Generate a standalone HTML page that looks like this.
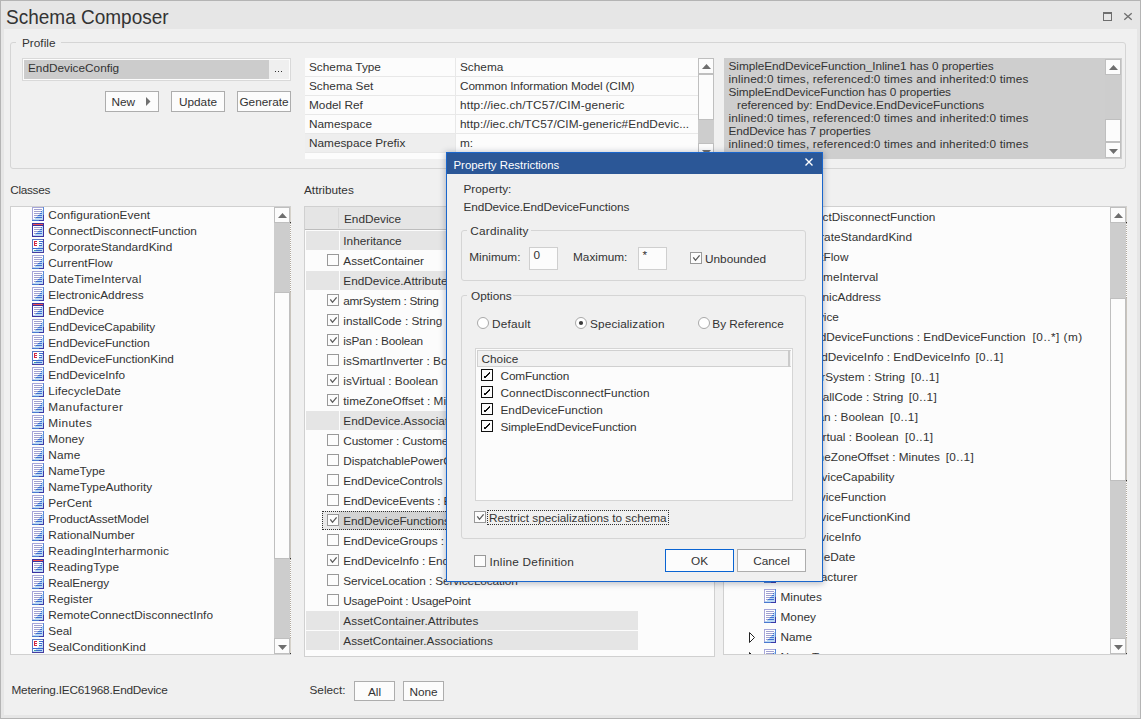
<!DOCTYPE html><html><head><meta charset="utf-8"><style>
*{margin:0;padding:0;box-sizing:border-box}
html,body{width:1141px;height:719px;overflow:hidden;background:#f0f0f0}
body{position:relative;font-family:"Liberation Sans",sans-serif;font-size:11.8px;line-height:16px;color:#333}
.t{position:absolute;white-space:nowrap;line-height:16px}
.abs{position:absolute}
svg{position:absolute;overflow:visible}
</style></head><body>
<div style="position:absolute;left:0px;top:0px;width:1141px;height:719px;border:1px solid #b4b4b4;background:#e6e6e6"></div>
<div style="position:absolute;left:4px;top:29px;width:1133px;height:686px;background:#f0f0f0"></div>
<div class="t" style="left:6px;top:4.6px;font-size:19px;line-height:22px;transform:scaleY(1.1);transform-origin:0 0;color:#333">Schema Composer</div>
<div style="position:absolute;left:1103px;top:12px;width:9px;height:9px;border:1px solid #6e6e6e;border-top-width:2px"></div>
<svg style="left:1124px;top:13px" width="8" height="7"><path d="M0.3 0.3L7.7 6.7M7.7 0.3L0.3 6.7" stroke="#6e6e6e" stroke-width="1.3"/></svg>
<div style="position:absolute;left:10px;top:42px;width:1116px;height:127px;border:1px solid #d5d5d5;border-radius:3px"></div>
<div style="position:absolute;left:16px;top:36px;width:45px;height:12px;background:#f0f0f0"></div>
<div class="t" style="left:22px;top:35px;">Profile</div>
<div style="position:absolute;left:22px;top:58px;width:269px;height:23px;border:1px solid #d9d9d9;background:#fcfcfc"></div>
<div style="position:absolute;left:24px;top:60px;width:245px;height:19px;background:#cccccc"></div>
<div style="position:absolute;left:269px;top:60px;width:20px;height:19px;background:#efefef"></div>
<div class="t" style="left:28px;top:60px;">EndDeviceConfig</div>
<div style="position:absolute;left:275px;top:71px;width:1px;height:1px;background:#333"></div>
<div style="position:absolute;left:278px;top:71px;width:1px;height:1px;background:#333"></div>
<div style="position:absolute;left:281px;top:71px;width:1px;height:1px;background:#333"></div>
<div style="position:absolute;left:105px;top:91px;width:54px;height:21px;border:1px solid #adadad;background:#fcfcfc"></div>
<div class="t" style="left:111.5px;top:94px;">New</div>
<svg style="left:146px;top:97px" width="5" height="9"><path d="M0 0L4.5 4.5L0 9Z" fill="#707070"/></svg>
<div style="position:absolute;left:171px;top:91px;width:54px;height:21px;border:1px solid #adadad;background:#fcfcfc"></div>
<div class="t" style="left:171px;top:94px;width:54px;text-align:center">Update</div>
<div style="position:absolute;left:237px;top:91px;width:54px;height:21px;border:1px solid #adadad;background:#fcfcfc"></div>
<div class="t" style="left:237px;top:94px;width:54px;text-align:center">Generate</div>
<div style="position:absolute;left:305px;top:58px;width:393px;height:101px;background:#fcfcfc"></div>
<div style="position:absolute;left:305px;top:76px;width:393px;height:1px;background:#e8e8e8"></div>
<div class="t" style="left:309px;top:59px;">Schema Type</div>
<div class="t" style="left:460px;top:59px;">Schema</div>
<div style="position:absolute;left:305px;top:95px;width:393px;height:1px;background:#e8e8e8"></div>
<div class="t" style="left:309px;top:78px;">Schema Set</div>
<div class="t" style="left:460px;top:78px;letter-spacing:-0.131px;">Common Information Model (CIM)</div>
<div style="position:absolute;left:305px;top:114px;width:393px;height:1px;background:#e8e8e8"></div>
<div class="t" style="left:309px;top:97px;">Model Ref</div>
<div class="t" style="left:460px;top:97px;letter-spacing:0.152px;">http://iec.ch/TC57/CIM-generic</div>
<div style="position:absolute;left:305px;top:133px;width:393px;height:1px;background:#e8e8e8"></div>
<div class="t" style="left:309px;top:116px;">Namespace</div>
<div class="t" style="left:460px;top:116px;letter-spacing:0.054px;">http://iec.ch/TC57/CIM-generic#EndDevic...</div>
<div style="position:absolute;left:305px;top:134px;width:150px;height:18px;background:#eeeeee"></div>
<div style="position:absolute;left:305px;top:152px;width:393px;height:1px;background:#e8e8e8"></div>
<div class="t" style="left:309px;top:135px;">Namespace Prefix</div>
<div class="t" style="left:460px;top:135px;">m:</div>
<div style="position:absolute;left:455px;top:58px;width:1px;height:94px;background:#e8e8e8"></div>
<div style="position:absolute;left:698px;top:58px;width:16px;height:101px;background:#cdcdcd"></div>
<div style="position:absolute;left:698px;top:58px;width:16px;height:16px;border:1px solid #bfbfbf;background:#fcfcfc"></div>
<svg style="left:702px;top:64px" width="9" height="5"><path d="M0 5L4.5 0L9 5Z" fill="#6e6e6e"/></svg>
<div style="position:absolute;left:698px;top:143px;width:16px;height:16px;border:1px solid #bfbfbf;background:#fcfcfc"></div>
<svg style="left:702px;top:149.5px" width="9" height="5"><path d="M0 0L4.5 5L9 0Z" fill="#6e6e6e"/></svg>
<div style="position:absolute;left:698px;top:74px;width:16px;height:46px;border:1px solid #bfbfbf;background:#fcfcfc"></div>
<div style="position:absolute;left:724px;top:58px;width:398px;height:101px;background:#cecece"></div>
<div class="t" style="left:728.5px;top:58px;letter-spacing:-0.051px;">SimpleEndDeviceFunction_Inline1 has 0 properties</div>
<div class="t" style="left:728.5px;top:71px;letter-spacing:0.132px;">inlined:0 times, referenced:0 times and inherited:0 times</div>
<div class="t" style="left:728.5px;top:84px;letter-spacing:-0.095px;">SimpleEndDeviceFunction has 0 properties</div>
<div class="t" style="left:737px;top:97px;">referenced by: EndDevice.EndDeviceFunctions</div>
<div class="t" style="left:728.5px;top:110px;letter-spacing:0.132px;">inlined:0 times, referenced:0 times and inherited:0 times</div>
<div class="t" style="left:728.5px;top:123px;letter-spacing:-0.108px;">EndDevice has 7 properties</div>
<div class="t" style="left:728.5px;top:136px;letter-spacing:0.132px;">inlined:0 times, referenced:0 times and inherited:0 times</div>
<div style="position:absolute;left:1105px;top:59px;width:16px;height:99px;background:#cdcdcd"></div>
<div style="position:absolute;left:1105px;top:59px;width:16px;height:16px;border:1px solid #bfbfbf;background:#fcfcfc"></div>
<svg style="left:1109px;top:65px" width="9" height="5"><path d="M0 5L4.5 0L9 5Z" fill="#6e6e6e"/></svg>
<div style="position:absolute;left:1105px;top:142px;width:16px;height:16px;border:1px solid #bfbfbf;background:#fcfcfc"></div>
<svg style="left:1109px;top:148.5px" width="9" height="5"><path d="M0 0L4.5 5L9 0Z" fill="#6e6e6e"/></svg>
<div style="position:absolute;left:1105px;top:119px;width:16px;height:23px;border:1px solid #bfbfbf;background:#fcfcfc"></div>
<div class="t" style="left:10.2px;top:182px;letter-spacing:-0.300px;">Classes</div>
<div class="t" style="left:304px;top:182px;">Attributes</div>
<div style="position:absolute;left:10px;top:206px;width:281px;height:449px;border:1px solid #d0d0d0;background:#fcfcfc"></div>
<svg style="left:32px;top:207px" width="12" height="14"><g shape-rendering="crispEdges"><rect x="0" y="0" width="12" height="14" fill="#fff"/><rect x="10" y="3" width="1" height="1" fill="#bcd8f2"/><rect x="9" y="4" width="2" height="1" fill="#bcd8f2"/><rect x="9" y="5" width="2" height="1" fill="#bcd8f2"/><rect x="8" y="6" width="3" height="1" fill="#bcd8f2"/><rect x="7" y="7" width="4" height="1" fill="#bcd8f2"/><rect x="6" y="8" width="5" height="1" fill="#bcd8f2"/><rect x="5" y="9" width="6" height="1" fill="#bcd8f2"/><rect x="4" y="10" width="7" height="1" fill="#bcd8f2"/><rect x="3" y="11" width="8" height="1" fill="#bcd8f2"/><rect x="1" y="12" width="10" height="1" fill="#bcd8f2"/><rect x="2" y="2" width="8" height="1" fill="#a0a0d0"/><rect x="2" y="4" width="8" height="1" fill="#a0a0d0"/><rect x="9" y="4" width="1" height="1" fill="#3f6fd2"/><rect x="2" y="6" width="8" height="1" fill="#a0a0d0"/><rect x="8" y="6" width="2" height="1" fill="#3f6fd2"/><rect x="2" y="8" width="8" height="1" fill="#a0a0d0"/><rect x="6" y="8" width="4" height="1" fill="#3f6fd2"/><rect x="2" y="10" width="8" height="1" fill="#a0a0d0"/><rect x="4" y="10" width="6" height="1" fill="#3f6fd2"/><rect x="0" y="0" width="12" height="1" fill="#a6a6da"/><rect x="0" y="0" width="1" height="14" fill="#a6a6da"/><rect x="11" y="0" width="1" height="8" fill="#5a8ad8"/><rect x="11" y="8" width="1" height="6" fill="#3a3aa8"/><rect x="0" y="13" width="7" height="1" fill="#4a7ad0"/><rect x="7" y="13" width="5" height="1" fill="#3a3aa8"/></g></svg>
<div class="t" style="left:48.3px;top:207px;letter-spacing:0.088px;">ConfigurationEvent</div>
<svg style="left:32px;top:223px" width="12" height="14"><g shape-rendering="crispEdges"><rect x="0" y="0" width="12" height="14" fill="#fff"/><rect x="10" y="3" width="1" height="1" fill="#bcd8f2"/><rect x="9" y="4" width="2" height="1" fill="#bcd8f2"/><rect x="9" y="5" width="2" height="1" fill="#bcd8f2"/><rect x="8" y="6" width="3" height="1" fill="#bcd8f2"/><rect x="7" y="7" width="4" height="1" fill="#bcd8f2"/><rect x="6" y="8" width="5" height="1" fill="#bcd8f2"/><rect x="5" y="9" width="6" height="1" fill="#bcd8f2"/><rect x="4" y="10" width="7" height="1" fill="#bcd8f2"/><rect x="3" y="11" width="8" height="1" fill="#bcd8f2"/><rect x="1" y="12" width="10" height="1" fill="#bcd8f2"/><rect x="2" y="4" width="8" height="1" fill="#a0a0d0"/><rect x="9" y="4" width="1" height="1" fill="#3f6fd2"/><rect x="2" y="6" width="8" height="1" fill="#a0a0d0"/><rect x="8" y="6" width="2" height="1" fill="#3f6fd2"/><rect x="2" y="8" width="8" height="1" fill="#a0a0d0"/><rect x="6" y="8" width="4" height="1" fill="#3f6fd2"/><rect x="2" y="10" width="8" height="1" fill="#a0a0d0"/><rect x="4" y="10" width="6" height="1" fill="#3f6fd2"/><rect x="0" y="0" width="12" height="1" fill="#3a32a0"/><rect x="0" y="0" width="1" height="14" fill="#3a32a0"/><rect x="11" y="0" width="1" height="14" fill="#3a32a0"/><rect x="0" y="13" width="12" height="1" fill="#3a32a0"/><rect x="1" y="1" width="10" height="1" fill="#f05050"/><rect x="1" y="2" width="10" height="1" fill="#3a32a0"/></g></svg>
<div class="t" style="left:48.3px;top:223px;letter-spacing:0.042px;">ConnectDisconnectFunction</div>
<svg style="left:32px;top:239px" width="12" height="14"><g shape-rendering="crispEdges"><rect x="0" y="0" width="12" height="14" fill="#fff"/><rect x="10" y="3" width="1" height="1" fill="#bcd8f2"/><rect x="9" y="4" width="2" height="1" fill="#bcd8f2"/><rect x="9" y="5" width="2" height="1" fill="#bcd8f2"/><rect x="8" y="6" width="3" height="1" fill="#bcd8f2"/><rect x="7" y="7" width="4" height="1" fill="#bcd8f2"/><rect x="6" y="8" width="5" height="1" fill="#bcd8f2"/><rect x="5" y="9" width="6" height="1" fill="#bcd8f2"/><rect x="4" y="10" width="7" height="1" fill="#bcd8f2"/><rect x="3" y="11" width="8" height="1" fill="#bcd8f2"/><rect x="1" y="12" width="10" height="1" fill="#bcd8f2"/><rect x="0" y="0" width="12" height="1" fill="#5a78c4"/><rect x="0" y="0" width="1" height="14" fill="#5a78c4"/><rect x="11" y="0" width="1" height="14" fill="#463ea0"/><rect x="0" y="13" width="12" height="1" fill="#463ea0"/><rect x="2" y="2" width="1" height="5" fill="#d42840"/><rect x="2" y="2" width="3" height="1" fill="#d42840"/><rect x="2" y="4" width="3" height="1" fill="#d42840"/><rect x="2" y="6" width="3" height="1" fill="#d42840"/><rect x="7" y="2" width="4" height="1" fill="#3a6ad0"/><rect x="7" y="4" width="1" height="1" fill="#3aa0a0"/><rect x="8" y="4" width="2" height="1" fill="#3a6ad0"/><rect x="7" y="6" width="3" height="1" fill="#3a6ad0"/><rect x="1" y="9" width="10" height="1" fill="#3a6ad0"/><rect x="2" y="11" width="2" height="1" fill="#3aa0a0"/><rect x="4" y="11" width="6" height="1" fill="#3a6ad0"/></g></svg>
<div class="t" style="left:48.3px;top:239px;">CorporateStandardKind</div>
<svg style="left:32px;top:255px" width="12" height="14"><g shape-rendering="crispEdges"><rect x="0" y="0" width="12" height="14" fill="#fff"/><rect x="10" y="3" width="1" height="1" fill="#bcd8f2"/><rect x="9" y="4" width="2" height="1" fill="#bcd8f2"/><rect x="9" y="5" width="2" height="1" fill="#bcd8f2"/><rect x="8" y="6" width="3" height="1" fill="#bcd8f2"/><rect x="7" y="7" width="4" height="1" fill="#bcd8f2"/><rect x="6" y="8" width="5" height="1" fill="#bcd8f2"/><rect x="5" y="9" width="6" height="1" fill="#bcd8f2"/><rect x="4" y="10" width="7" height="1" fill="#bcd8f2"/><rect x="3" y="11" width="8" height="1" fill="#bcd8f2"/><rect x="1" y="12" width="10" height="1" fill="#bcd8f2"/><rect x="2" y="2" width="8" height="1" fill="#a0a0d0"/><rect x="2" y="4" width="8" height="1" fill="#a0a0d0"/><rect x="9" y="4" width="1" height="1" fill="#3f6fd2"/><rect x="2" y="6" width="8" height="1" fill="#a0a0d0"/><rect x="8" y="6" width="2" height="1" fill="#3f6fd2"/><rect x="2" y="8" width="8" height="1" fill="#a0a0d0"/><rect x="6" y="8" width="4" height="1" fill="#3f6fd2"/><rect x="2" y="10" width="8" height="1" fill="#a0a0d0"/><rect x="4" y="10" width="6" height="1" fill="#3f6fd2"/><rect x="0" y="0" width="12" height="1" fill="#a6a6da"/><rect x="0" y="0" width="1" height="14" fill="#a6a6da"/><rect x="11" y="0" width="1" height="8" fill="#5a8ad8"/><rect x="11" y="8" width="1" height="6" fill="#3a3aa8"/><rect x="0" y="13" width="7" height="1" fill="#4a7ad0"/><rect x="7" y="13" width="5" height="1" fill="#3a3aa8"/></g></svg>
<div class="t" style="left:48.3px;top:255px;">CurrentFlow</div>
<svg style="left:32px;top:271px" width="12" height="14"><g shape-rendering="crispEdges"><rect x="0" y="0" width="12" height="14" fill="#fff"/><rect x="10" y="3" width="1" height="1" fill="#bcd8f2"/><rect x="9" y="4" width="2" height="1" fill="#bcd8f2"/><rect x="9" y="5" width="2" height="1" fill="#bcd8f2"/><rect x="8" y="6" width="3" height="1" fill="#bcd8f2"/><rect x="7" y="7" width="4" height="1" fill="#bcd8f2"/><rect x="6" y="8" width="5" height="1" fill="#bcd8f2"/><rect x="5" y="9" width="6" height="1" fill="#bcd8f2"/><rect x="4" y="10" width="7" height="1" fill="#bcd8f2"/><rect x="3" y="11" width="8" height="1" fill="#bcd8f2"/><rect x="1" y="12" width="10" height="1" fill="#bcd8f2"/><rect x="2" y="2" width="8" height="1" fill="#a0a0d0"/><rect x="2" y="4" width="8" height="1" fill="#a0a0d0"/><rect x="9" y="4" width="1" height="1" fill="#3f6fd2"/><rect x="2" y="6" width="8" height="1" fill="#a0a0d0"/><rect x="8" y="6" width="2" height="1" fill="#3f6fd2"/><rect x="2" y="8" width="8" height="1" fill="#a0a0d0"/><rect x="6" y="8" width="4" height="1" fill="#3f6fd2"/><rect x="2" y="10" width="8" height="1" fill="#a0a0d0"/><rect x="4" y="10" width="6" height="1" fill="#3f6fd2"/><rect x="0" y="0" width="12" height="1" fill="#a6a6da"/><rect x="0" y="0" width="1" height="14" fill="#a6a6da"/><rect x="11" y="0" width="1" height="8" fill="#5a8ad8"/><rect x="11" y="8" width="1" height="6" fill="#3a3aa8"/><rect x="0" y="13" width="7" height="1" fill="#4a7ad0"/><rect x="7" y="13" width="5" height="1" fill="#3a3aa8"/></g></svg>
<div class="t" style="left:48.3px;top:271px;letter-spacing:0.240px;">DateTimeInterval</div>
<svg style="left:32px;top:287px" width="12" height="14"><g shape-rendering="crispEdges"><rect x="0" y="0" width="12" height="14" fill="#fff"/><rect x="10" y="3" width="1" height="1" fill="#bcd8f2"/><rect x="9" y="4" width="2" height="1" fill="#bcd8f2"/><rect x="9" y="5" width="2" height="1" fill="#bcd8f2"/><rect x="8" y="6" width="3" height="1" fill="#bcd8f2"/><rect x="7" y="7" width="4" height="1" fill="#bcd8f2"/><rect x="6" y="8" width="5" height="1" fill="#bcd8f2"/><rect x="5" y="9" width="6" height="1" fill="#bcd8f2"/><rect x="4" y="10" width="7" height="1" fill="#bcd8f2"/><rect x="3" y="11" width="8" height="1" fill="#bcd8f2"/><rect x="1" y="12" width="10" height="1" fill="#bcd8f2"/><rect x="2" y="2" width="8" height="1" fill="#a0a0d0"/><rect x="2" y="4" width="8" height="1" fill="#a0a0d0"/><rect x="9" y="4" width="1" height="1" fill="#3f6fd2"/><rect x="2" y="6" width="8" height="1" fill="#a0a0d0"/><rect x="8" y="6" width="2" height="1" fill="#3f6fd2"/><rect x="2" y="8" width="8" height="1" fill="#a0a0d0"/><rect x="6" y="8" width="4" height="1" fill="#3f6fd2"/><rect x="2" y="10" width="8" height="1" fill="#a0a0d0"/><rect x="4" y="10" width="6" height="1" fill="#3f6fd2"/><rect x="0" y="0" width="12" height="1" fill="#a6a6da"/><rect x="0" y="0" width="1" height="14" fill="#a6a6da"/><rect x="11" y="0" width="1" height="8" fill="#5a8ad8"/><rect x="11" y="8" width="1" height="6" fill="#3a3aa8"/><rect x="0" y="13" width="7" height="1" fill="#4a7ad0"/><rect x="7" y="13" width="5" height="1" fill="#3a3aa8"/></g></svg>
<div class="t" style="left:48.3px;top:287px;letter-spacing:0.012px;">ElectronicAddress</div>
<svg style="left:32px;top:303px" width="12" height="14"><g shape-rendering="crispEdges"><rect x="0" y="0" width="12" height="14" fill="#fff"/><rect x="10" y="3" width="1" height="1" fill="#bcd8f2"/><rect x="9" y="4" width="2" height="1" fill="#bcd8f2"/><rect x="9" y="5" width="2" height="1" fill="#bcd8f2"/><rect x="8" y="6" width="3" height="1" fill="#bcd8f2"/><rect x="7" y="7" width="4" height="1" fill="#bcd8f2"/><rect x="6" y="8" width="5" height="1" fill="#bcd8f2"/><rect x="5" y="9" width="6" height="1" fill="#bcd8f2"/><rect x="4" y="10" width="7" height="1" fill="#bcd8f2"/><rect x="3" y="11" width="8" height="1" fill="#bcd8f2"/><rect x="1" y="12" width="10" height="1" fill="#bcd8f2"/><rect x="2" y="4" width="8" height="1" fill="#a0a0d0"/><rect x="9" y="4" width="1" height="1" fill="#3f6fd2"/><rect x="2" y="6" width="8" height="1" fill="#a0a0d0"/><rect x="8" y="6" width="2" height="1" fill="#3f6fd2"/><rect x="2" y="8" width="8" height="1" fill="#a0a0d0"/><rect x="6" y="8" width="4" height="1" fill="#3f6fd2"/><rect x="2" y="10" width="8" height="1" fill="#a0a0d0"/><rect x="4" y="10" width="6" height="1" fill="#3f6fd2"/><rect x="0" y="0" width="12" height="1" fill="#3a32a0"/><rect x="0" y="0" width="1" height="14" fill="#3a32a0"/><rect x="11" y="0" width="1" height="14" fill="#3a32a0"/><rect x="0" y="13" width="12" height="1" fill="#3a32a0"/><rect x="1" y="1" width="10" height="1" fill="#f05050"/><rect x="1" y="2" width="10" height="1" fill="#3a32a0"/></g></svg>
<div class="t" style="left:48.3px;top:303px;letter-spacing:-0.162px;">EndDevice</div>
<svg style="left:32px;top:319px" width="12" height="14"><g shape-rendering="crispEdges"><rect x="0" y="0" width="12" height="14" fill="#fff"/><rect x="10" y="3" width="1" height="1" fill="#bcd8f2"/><rect x="9" y="4" width="2" height="1" fill="#bcd8f2"/><rect x="9" y="5" width="2" height="1" fill="#bcd8f2"/><rect x="8" y="6" width="3" height="1" fill="#bcd8f2"/><rect x="7" y="7" width="4" height="1" fill="#bcd8f2"/><rect x="6" y="8" width="5" height="1" fill="#bcd8f2"/><rect x="5" y="9" width="6" height="1" fill="#bcd8f2"/><rect x="4" y="10" width="7" height="1" fill="#bcd8f2"/><rect x="3" y="11" width="8" height="1" fill="#bcd8f2"/><rect x="1" y="12" width="10" height="1" fill="#bcd8f2"/><rect x="2" y="2" width="8" height="1" fill="#a0a0d0"/><rect x="2" y="4" width="8" height="1" fill="#a0a0d0"/><rect x="9" y="4" width="1" height="1" fill="#3f6fd2"/><rect x="2" y="6" width="8" height="1" fill="#a0a0d0"/><rect x="8" y="6" width="2" height="1" fill="#3f6fd2"/><rect x="2" y="8" width="8" height="1" fill="#a0a0d0"/><rect x="6" y="8" width="4" height="1" fill="#3f6fd2"/><rect x="2" y="10" width="8" height="1" fill="#a0a0d0"/><rect x="4" y="10" width="6" height="1" fill="#3f6fd2"/><rect x="0" y="0" width="12" height="1" fill="#a6a6da"/><rect x="0" y="0" width="1" height="14" fill="#a6a6da"/><rect x="11" y="0" width="1" height="8" fill="#5a8ad8"/><rect x="11" y="8" width="1" height="6" fill="#3a3aa8"/><rect x="0" y="13" width="7" height="1" fill="#4a7ad0"/><rect x="7" y="13" width="5" height="1" fill="#3a3aa8"/></g></svg>
<div class="t" style="left:48.3px;top:319px;letter-spacing:-0.111px;">EndDeviceCapability</div>
<svg style="left:32px;top:335px" width="12" height="14"><g shape-rendering="crispEdges"><rect x="0" y="0" width="12" height="14" fill="#fff"/><rect x="10" y="3" width="1" height="1" fill="#bcd8f2"/><rect x="9" y="4" width="2" height="1" fill="#bcd8f2"/><rect x="9" y="5" width="2" height="1" fill="#bcd8f2"/><rect x="8" y="6" width="3" height="1" fill="#bcd8f2"/><rect x="7" y="7" width="4" height="1" fill="#bcd8f2"/><rect x="6" y="8" width="5" height="1" fill="#bcd8f2"/><rect x="5" y="9" width="6" height="1" fill="#bcd8f2"/><rect x="4" y="10" width="7" height="1" fill="#bcd8f2"/><rect x="3" y="11" width="8" height="1" fill="#bcd8f2"/><rect x="1" y="12" width="10" height="1" fill="#bcd8f2"/><rect x="2" y="2" width="8" height="1" fill="#a0a0d0"/><rect x="2" y="4" width="8" height="1" fill="#a0a0d0"/><rect x="9" y="4" width="1" height="1" fill="#3f6fd2"/><rect x="2" y="6" width="8" height="1" fill="#a0a0d0"/><rect x="8" y="6" width="2" height="1" fill="#3f6fd2"/><rect x="2" y="8" width="8" height="1" fill="#a0a0d0"/><rect x="6" y="8" width="4" height="1" fill="#3f6fd2"/><rect x="2" y="10" width="8" height="1" fill="#a0a0d0"/><rect x="4" y="10" width="6" height="1" fill="#3f6fd2"/><rect x="0" y="0" width="12" height="1" fill="#a6a6da"/><rect x="0" y="0" width="1" height="14" fill="#a6a6da"/><rect x="11" y="0" width="1" height="8" fill="#5a8ad8"/><rect x="11" y="8" width="1" height="6" fill="#3a3aa8"/><rect x="0" y="13" width="7" height="1" fill="#4a7ad0"/><rect x="7" y="13" width="5" height="1" fill="#3a3aa8"/></g></svg>
<div class="t" style="left:48.3px;top:335px;letter-spacing:-0.050px;">EndDeviceFunction</div>
<svg style="left:32px;top:351px" width="12" height="14"><g shape-rendering="crispEdges"><rect x="0" y="0" width="12" height="14" fill="#fff"/><rect x="10" y="3" width="1" height="1" fill="#bcd8f2"/><rect x="9" y="4" width="2" height="1" fill="#bcd8f2"/><rect x="9" y="5" width="2" height="1" fill="#bcd8f2"/><rect x="8" y="6" width="3" height="1" fill="#bcd8f2"/><rect x="7" y="7" width="4" height="1" fill="#bcd8f2"/><rect x="6" y="8" width="5" height="1" fill="#bcd8f2"/><rect x="5" y="9" width="6" height="1" fill="#bcd8f2"/><rect x="4" y="10" width="7" height="1" fill="#bcd8f2"/><rect x="3" y="11" width="8" height="1" fill="#bcd8f2"/><rect x="1" y="12" width="10" height="1" fill="#bcd8f2"/><rect x="0" y="0" width="12" height="1" fill="#5a78c4"/><rect x="0" y="0" width="1" height="14" fill="#5a78c4"/><rect x="11" y="0" width="1" height="14" fill="#463ea0"/><rect x="0" y="13" width="12" height="1" fill="#463ea0"/><rect x="2" y="2" width="1" height="5" fill="#d42840"/><rect x="2" y="2" width="3" height="1" fill="#d42840"/><rect x="2" y="4" width="3" height="1" fill="#d42840"/><rect x="2" y="6" width="3" height="1" fill="#d42840"/><rect x="7" y="2" width="4" height="1" fill="#3a6ad0"/><rect x="7" y="4" width="1" height="1" fill="#3aa0a0"/><rect x="8" y="4" width="2" height="1" fill="#3a6ad0"/><rect x="7" y="6" width="3" height="1" fill="#3a6ad0"/><rect x="1" y="9" width="10" height="1" fill="#3a6ad0"/><rect x="2" y="11" width="2" height="1" fill="#3aa0a0"/><rect x="4" y="11" width="6" height="1" fill="#3a6ad0"/></g></svg>
<div class="t" style="left:48.3px;top:351px;letter-spacing:-0.015px;">EndDeviceFunctionKind</div>
<svg style="left:32px;top:367px" width="12" height="14"><g shape-rendering="crispEdges"><rect x="0" y="0" width="12" height="14" fill="#fff"/><rect x="10" y="3" width="1" height="1" fill="#bcd8f2"/><rect x="9" y="4" width="2" height="1" fill="#bcd8f2"/><rect x="9" y="5" width="2" height="1" fill="#bcd8f2"/><rect x="8" y="6" width="3" height="1" fill="#bcd8f2"/><rect x="7" y="7" width="4" height="1" fill="#bcd8f2"/><rect x="6" y="8" width="5" height="1" fill="#bcd8f2"/><rect x="5" y="9" width="6" height="1" fill="#bcd8f2"/><rect x="4" y="10" width="7" height="1" fill="#bcd8f2"/><rect x="3" y="11" width="8" height="1" fill="#bcd8f2"/><rect x="1" y="12" width="10" height="1" fill="#bcd8f2"/><rect x="2" y="2" width="8" height="1" fill="#a0a0d0"/><rect x="2" y="4" width="8" height="1" fill="#a0a0d0"/><rect x="9" y="4" width="1" height="1" fill="#3f6fd2"/><rect x="2" y="6" width="8" height="1" fill="#a0a0d0"/><rect x="8" y="6" width="2" height="1" fill="#3f6fd2"/><rect x="2" y="8" width="8" height="1" fill="#a0a0d0"/><rect x="6" y="8" width="4" height="1" fill="#3f6fd2"/><rect x="2" y="10" width="8" height="1" fill="#a0a0d0"/><rect x="4" y="10" width="6" height="1" fill="#3f6fd2"/><rect x="0" y="0" width="12" height="1" fill="#a6a6da"/><rect x="0" y="0" width="1" height="14" fill="#a6a6da"/><rect x="11" y="0" width="1" height="8" fill="#5a8ad8"/><rect x="11" y="8" width="1" height="6" fill="#3a3aa8"/><rect x="0" y="13" width="7" height="1" fill="#4a7ad0"/><rect x="7" y="13" width="5" height="1" fill="#3a3aa8"/></g></svg>
<div class="t" style="left:48.3px;top:367px;">EndDeviceInfo</div>
<svg style="left:32px;top:383px" width="12" height="14"><g shape-rendering="crispEdges"><rect x="0" y="0" width="12" height="14" fill="#fff"/><rect x="10" y="3" width="1" height="1" fill="#bcd8f2"/><rect x="9" y="4" width="2" height="1" fill="#bcd8f2"/><rect x="9" y="5" width="2" height="1" fill="#bcd8f2"/><rect x="8" y="6" width="3" height="1" fill="#bcd8f2"/><rect x="7" y="7" width="4" height="1" fill="#bcd8f2"/><rect x="6" y="8" width="5" height="1" fill="#bcd8f2"/><rect x="5" y="9" width="6" height="1" fill="#bcd8f2"/><rect x="4" y="10" width="7" height="1" fill="#bcd8f2"/><rect x="3" y="11" width="8" height="1" fill="#bcd8f2"/><rect x="1" y="12" width="10" height="1" fill="#bcd8f2"/><rect x="2" y="2" width="8" height="1" fill="#a0a0d0"/><rect x="2" y="4" width="8" height="1" fill="#a0a0d0"/><rect x="9" y="4" width="1" height="1" fill="#3f6fd2"/><rect x="2" y="6" width="8" height="1" fill="#a0a0d0"/><rect x="8" y="6" width="2" height="1" fill="#3f6fd2"/><rect x="2" y="8" width="8" height="1" fill="#a0a0d0"/><rect x="6" y="8" width="4" height="1" fill="#3f6fd2"/><rect x="2" y="10" width="8" height="1" fill="#a0a0d0"/><rect x="4" y="10" width="6" height="1" fill="#3f6fd2"/><rect x="0" y="0" width="12" height="1" fill="#a6a6da"/><rect x="0" y="0" width="1" height="14" fill="#a6a6da"/><rect x="11" y="0" width="1" height="8" fill="#5a8ad8"/><rect x="11" y="8" width="1" height="6" fill="#3a3aa8"/><rect x="0" y="13" width="7" height="1" fill="#4a7ad0"/><rect x="7" y="13" width="5" height="1" fill="#3a3aa8"/></g></svg>
<div class="t" style="left:48.3px;top:383px;letter-spacing:0.133px;">LifecycleDate</div>
<svg style="left:32px;top:399px" width="12" height="14"><g shape-rendering="crispEdges"><rect x="0" y="0" width="12" height="14" fill="#fff"/><rect x="10" y="3" width="1" height="1" fill="#bcd8f2"/><rect x="9" y="4" width="2" height="1" fill="#bcd8f2"/><rect x="9" y="5" width="2" height="1" fill="#bcd8f2"/><rect x="8" y="6" width="3" height="1" fill="#bcd8f2"/><rect x="7" y="7" width="4" height="1" fill="#bcd8f2"/><rect x="6" y="8" width="5" height="1" fill="#bcd8f2"/><rect x="5" y="9" width="6" height="1" fill="#bcd8f2"/><rect x="4" y="10" width="7" height="1" fill="#bcd8f2"/><rect x="3" y="11" width="8" height="1" fill="#bcd8f2"/><rect x="1" y="12" width="10" height="1" fill="#bcd8f2"/><rect x="2" y="2" width="8" height="1" fill="#a0a0d0"/><rect x="2" y="4" width="8" height="1" fill="#a0a0d0"/><rect x="9" y="4" width="1" height="1" fill="#3f6fd2"/><rect x="2" y="6" width="8" height="1" fill="#a0a0d0"/><rect x="8" y="6" width="2" height="1" fill="#3f6fd2"/><rect x="2" y="8" width="8" height="1" fill="#a0a0d0"/><rect x="6" y="8" width="4" height="1" fill="#3f6fd2"/><rect x="2" y="10" width="8" height="1" fill="#a0a0d0"/><rect x="4" y="10" width="6" height="1" fill="#3f6fd2"/><rect x="0" y="0" width="12" height="1" fill="#a6a6da"/><rect x="0" y="0" width="1" height="14" fill="#a6a6da"/><rect x="11" y="0" width="1" height="8" fill="#5a8ad8"/><rect x="11" y="8" width="1" height="6" fill="#3a3aa8"/><rect x="0" y="13" width="7" height="1" fill="#4a7ad0"/><rect x="7" y="13" width="5" height="1" fill="#3a3aa8"/></g></svg>
<div class="t" style="left:48.3px;top:399px;letter-spacing:0.464px;">Manufacturer</div>
<svg style="left:32px;top:415px" width="12" height="14"><g shape-rendering="crispEdges"><rect x="0" y="0" width="12" height="14" fill="#fff"/><rect x="10" y="3" width="1" height="1" fill="#bcd8f2"/><rect x="9" y="4" width="2" height="1" fill="#bcd8f2"/><rect x="9" y="5" width="2" height="1" fill="#bcd8f2"/><rect x="8" y="6" width="3" height="1" fill="#bcd8f2"/><rect x="7" y="7" width="4" height="1" fill="#bcd8f2"/><rect x="6" y="8" width="5" height="1" fill="#bcd8f2"/><rect x="5" y="9" width="6" height="1" fill="#bcd8f2"/><rect x="4" y="10" width="7" height="1" fill="#bcd8f2"/><rect x="3" y="11" width="8" height="1" fill="#bcd8f2"/><rect x="1" y="12" width="10" height="1" fill="#bcd8f2"/><rect x="2" y="2" width="8" height="1" fill="#a0a0d0"/><rect x="2" y="4" width="8" height="1" fill="#a0a0d0"/><rect x="9" y="4" width="1" height="1" fill="#3f6fd2"/><rect x="2" y="6" width="8" height="1" fill="#a0a0d0"/><rect x="8" y="6" width="2" height="1" fill="#3f6fd2"/><rect x="2" y="8" width="8" height="1" fill="#a0a0d0"/><rect x="6" y="8" width="4" height="1" fill="#3f6fd2"/><rect x="2" y="10" width="8" height="1" fill="#a0a0d0"/><rect x="4" y="10" width="6" height="1" fill="#3f6fd2"/><rect x="0" y="0" width="12" height="1" fill="#a6a6da"/><rect x="0" y="0" width="1" height="14" fill="#a6a6da"/><rect x="11" y="0" width="1" height="8" fill="#5a8ad8"/><rect x="11" y="8" width="1" height="6" fill="#3a3aa8"/><rect x="0" y="13" width="7" height="1" fill="#4a7ad0"/><rect x="7" y="13" width="5" height="1" fill="#3a3aa8"/></g></svg>
<div class="t" style="left:48.3px;top:415px;letter-spacing:0.367px;">Minutes</div>
<svg style="left:32px;top:431px" width="12" height="14"><g shape-rendering="crispEdges"><rect x="0" y="0" width="12" height="14" fill="#fff"/><rect x="10" y="3" width="1" height="1" fill="#bcd8f2"/><rect x="9" y="4" width="2" height="1" fill="#bcd8f2"/><rect x="9" y="5" width="2" height="1" fill="#bcd8f2"/><rect x="8" y="6" width="3" height="1" fill="#bcd8f2"/><rect x="7" y="7" width="4" height="1" fill="#bcd8f2"/><rect x="6" y="8" width="5" height="1" fill="#bcd8f2"/><rect x="5" y="9" width="6" height="1" fill="#bcd8f2"/><rect x="4" y="10" width="7" height="1" fill="#bcd8f2"/><rect x="3" y="11" width="8" height="1" fill="#bcd8f2"/><rect x="1" y="12" width="10" height="1" fill="#bcd8f2"/><rect x="2" y="2" width="8" height="1" fill="#a0a0d0"/><rect x="2" y="4" width="8" height="1" fill="#a0a0d0"/><rect x="9" y="4" width="1" height="1" fill="#3f6fd2"/><rect x="2" y="6" width="8" height="1" fill="#a0a0d0"/><rect x="8" y="6" width="2" height="1" fill="#3f6fd2"/><rect x="2" y="8" width="8" height="1" fill="#a0a0d0"/><rect x="6" y="8" width="4" height="1" fill="#3f6fd2"/><rect x="2" y="10" width="8" height="1" fill="#a0a0d0"/><rect x="4" y="10" width="6" height="1" fill="#3f6fd2"/><rect x="0" y="0" width="12" height="1" fill="#a6a6da"/><rect x="0" y="0" width="1" height="14" fill="#a6a6da"/><rect x="11" y="0" width="1" height="8" fill="#5a8ad8"/><rect x="11" y="8" width="1" height="6" fill="#3a3aa8"/><rect x="0" y="13" width="7" height="1" fill="#4a7ad0"/><rect x="7" y="13" width="5" height="1" fill="#3a3aa8"/></g></svg>
<div class="t" style="left:48.3px;top:431px;letter-spacing:0.125px;">Money</div>
<svg style="left:32px;top:447px" width="12" height="14"><g shape-rendering="crispEdges"><rect x="0" y="0" width="12" height="14" fill="#fff"/><rect x="10" y="3" width="1" height="1" fill="#bcd8f2"/><rect x="9" y="4" width="2" height="1" fill="#bcd8f2"/><rect x="9" y="5" width="2" height="1" fill="#bcd8f2"/><rect x="8" y="6" width="3" height="1" fill="#bcd8f2"/><rect x="7" y="7" width="4" height="1" fill="#bcd8f2"/><rect x="6" y="8" width="5" height="1" fill="#bcd8f2"/><rect x="5" y="9" width="6" height="1" fill="#bcd8f2"/><rect x="4" y="10" width="7" height="1" fill="#bcd8f2"/><rect x="3" y="11" width="8" height="1" fill="#bcd8f2"/><rect x="1" y="12" width="10" height="1" fill="#bcd8f2"/><rect x="2" y="2" width="8" height="1" fill="#a0a0d0"/><rect x="2" y="4" width="8" height="1" fill="#a0a0d0"/><rect x="9" y="4" width="1" height="1" fill="#3f6fd2"/><rect x="2" y="6" width="8" height="1" fill="#a0a0d0"/><rect x="8" y="6" width="2" height="1" fill="#3f6fd2"/><rect x="2" y="8" width="8" height="1" fill="#a0a0d0"/><rect x="6" y="8" width="4" height="1" fill="#3f6fd2"/><rect x="2" y="10" width="8" height="1" fill="#a0a0d0"/><rect x="4" y="10" width="6" height="1" fill="#3f6fd2"/><rect x="0" y="0" width="12" height="1" fill="#a6a6da"/><rect x="0" y="0" width="1" height="14" fill="#a6a6da"/><rect x="11" y="0" width="1" height="8" fill="#5a8ad8"/><rect x="11" y="8" width="1" height="6" fill="#3a3aa8"/><rect x="0" y="13" width="7" height="1" fill="#4a7ad0"/><rect x="7" y="13" width="5" height="1" fill="#3a3aa8"/></g></svg>
<div class="t" style="left:48.3px;top:447px;letter-spacing:0.200px;">Name</div>
<svg style="left:32px;top:463px" width="12" height="14"><g shape-rendering="crispEdges"><rect x="0" y="0" width="12" height="14" fill="#fff"/><rect x="10" y="3" width="1" height="1" fill="#bcd8f2"/><rect x="9" y="4" width="2" height="1" fill="#bcd8f2"/><rect x="9" y="5" width="2" height="1" fill="#bcd8f2"/><rect x="8" y="6" width="3" height="1" fill="#bcd8f2"/><rect x="7" y="7" width="4" height="1" fill="#bcd8f2"/><rect x="6" y="8" width="5" height="1" fill="#bcd8f2"/><rect x="5" y="9" width="6" height="1" fill="#bcd8f2"/><rect x="4" y="10" width="7" height="1" fill="#bcd8f2"/><rect x="3" y="11" width="8" height="1" fill="#bcd8f2"/><rect x="1" y="12" width="10" height="1" fill="#bcd8f2"/><rect x="2" y="2" width="8" height="1" fill="#a0a0d0"/><rect x="2" y="4" width="8" height="1" fill="#a0a0d0"/><rect x="9" y="4" width="1" height="1" fill="#3f6fd2"/><rect x="2" y="6" width="8" height="1" fill="#a0a0d0"/><rect x="8" y="6" width="2" height="1" fill="#3f6fd2"/><rect x="2" y="8" width="8" height="1" fill="#a0a0d0"/><rect x="6" y="8" width="4" height="1" fill="#3f6fd2"/><rect x="2" y="10" width="8" height="1" fill="#a0a0d0"/><rect x="4" y="10" width="6" height="1" fill="#3f6fd2"/><rect x="0" y="0" width="12" height="1" fill="#a6a6da"/><rect x="0" y="0" width="1" height="14" fill="#a6a6da"/><rect x="11" y="0" width="1" height="8" fill="#5a8ad8"/><rect x="11" y="8" width="1" height="6" fill="#3a3aa8"/><rect x="0" y="13" width="7" height="1" fill="#4a7ad0"/><rect x="7" y="13" width="5" height="1" fill="#3a3aa8"/></g></svg>
<div class="t" style="left:48.3px;top:463px;letter-spacing:-0.057px;">NameType</div>
<svg style="left:32px;top:479px" width="12" height="14"><g shape-rendering="crispEdges"><rect x="0" y="0" width="12" height="14" fill="#fff"/><rect x="10" y="3" width="1" height="1" fill="#bcd8f2"/><rect x="9" y="4" width="2" height="1" fill="#bcd8f2"/><rect x="9" y="5" width="2" height="1" fill="#bcd8f2"/><rect x="8" y="6" width="3" height="1" fill="#bcd8f2"/><rect x="7" y="7" width="4" height="1" fill="#bcd8f2"/><rect x="6" y="8" width="5" height="1" fill="#bcd8f2"/><rect x="5" y="9" width="6" height="1" fill="#bcd8f2"/><rect x="4" y="10" width="7" height="1" fill="#bcd8f2"/><rect x="3" y="11" width="8" height="1" fill="#bcd8f2"/><rect x="1" y="12" width="10" height="1" fill="#bcd8f2"/><rect x="2" y="2" width="8" height="1" fill="#a0a0d0"/><rect x="2" y="4" width="8" height="1" fill="#a0a0d0"/><rect x="9" y="4" width="1" height="1" fill="#3f6fd2"/><rect x="2" y="6" width="8" height="1" fill="#a0a0d0"/><rect x="8" y="6" width="2" height="1" fill="#3f6fd2"/><rect x="2" y="8" width="8" height="1" fill="#a0a0d0"/><rect x="6" y="8" width="4" height="1" fill="#3f6fd2"/><rect x="2" y="10" width="8" height="1" fill="#a0a0d0"/><rect x="4" y="10" width="6" height="1" fill="#3f6fd2"/><rect x="0" y="0" width="12" height="1" fill="#a6a6da"/><rect x="0" y="0" width="1" height="14" fill="#a6a6da"/><rect x="11" y="0" width="1" height="8" fill="#5a8ad8"/><rect x="11" y="8" width="1" height="6" fill="#3a3aa8"/><rect x="0" y="13" width="7" height="1" fill="#4a7ad0"/><rect x="7" y="13" width="5" height="1" fill="#3a3aa8"/></g></svg>
<div class="t" style="left:48.3px;top:479px;letter-spacing:0.019px;">NameTypeAuthority</div>
<svg style="left:32px;top:495px" width="12" height="14"><g shape-rendering="crispEdges"><rect x="0" y="0" width="12" height="14" fill="#fff"/><rect x="10" y="3" width="1" height="1" fill="#bcd8f2"/><rect x="9" y="4" width="2" height="1" fill="#bcd8f2"/><rect x="9" y="5" width="2" height="1" fill="#bcd8f2"/><rect x="8" y="6" width="3" height="1" fill="#bcd8f2"/><rect x="7" y="7" width="4" height="1" fill="#bcd8f2"/><rect x="6" y="8" width="5" height="1" fill="#bcd8f2"/><rect x="5" y="9" width="6" height="1" fill="#bcd8f2"/><rect x="4" y="10" width="7" height="1" fill="#bcd8f2"/><rect x="3" y="11" width="8" height="1" fill="#bcd8f2"/><rect x="1" y="12" width="10" height="1" fill="#bcd8f2"/><rect x="2" y="2" width="8" height="1" fill="#a0a0d0"/><rect x="2" y="4" width="8" height="1" fill="#a0a0d0"/><rect x="9" y="4" width="1" height="1" fill="#3f6fd2"/><rect x="2" y="6" width="8" height="1" fill="#a0a0d0"/><rect x="8" y="6" width="2" height="1" fill="#3f6fd2"/><rect x="2" y="8" width="8" height="1" fill="#a0a0d0"/><rect x="6" y="8" width="4" height="1" fill="#3f6fd2"/><rect x="2" y="10" width="8" height="1" fill="#a0a0d0"/><rect x="4" y="10" width="6" height="1" fill="#3f6fd2"/><rect x="0" y="0" width="12" height="1" fill="#a6a6da"/><rect x="0" y="0" width="1" height="14" fill="#a6a6da"/><rect x="11" y="0" width="1" height="8" fill="#5a8ad8"/><rect x="11" y="8" width="1" height="6" fill="#3a3aa8"/><rect x="0" y="13" width="7" height="1" fill="#4a7ad0"/><rect x="7" y="13" width="5" height="1" fill="#3a3aa8"/></g></svg>
<div class="t" style="left:48.3px;top:495px;letter-spacing:0.033px;">PerCent</div>
<svg style="left:32px;top:511px" width="12" height="14"><g shape-rendering="crispEdges"><rect x="0" y="0" width="12" height="14" fill="#fff"/><rect x="10" y="3" width="1" height="1" fill="#bcd8f2"/><rect x="9" y="4" width="2" height="1" fill="#bcd8f2"/><rect x="9" y="5" width="2" height="1" fill="#bcd8f2"/><rect x="8" y="6" width="3" height="1" fill="#bcd8f2"/><rect x="7" y="7" width="4" height="1" fill="#bcd8f2"/><rect x="6" y="8" width="5" height="1" fill="#bcd8f2"/><rect x="5" y="9" width="6" height="1" fill="#bcd8f2"/><rect x="4" y="10" width="7" height="1" fill="#bcd8f2"/><rect x="3" y="11" width="8" height="1" fill="#bcd8f2"/><rect x="1" y="12" width="10" height="1" fill="#bcd8f2"/><rect x="2" y="2" width="8" height="1" fill="#a0a0d0"/><rect x="2" y="4" width="8" height="1" fill="#a0a0d0"/><rect x="9" y="4" width="1" height="1" fill="#3f6fd2"/><rect x="2" y="6" width="8" height="1" fill="#a0a0d0"/><rect x="8" y="6" width="2" height="1" fill="#3f6fd2"/><rect x="2" y="8" width="8" height="1" fill="#a0a0d0"/><rect x="6" y="8" width="4" height="1" fill="#3f6fd2"/><rect x="2" y="10" width="8" height="1" fill="#a0a0d0"/><rect x="4" y="10" width="6" height="1" fill="#3f6fd2"/><rect x="0" y="0" width="12" height="1" fill="#a6a6da"/><rect x="0" y="0" width="1" height="14" fill="#a6a6da"/><rect x="11" y="0" width="1" height="8" fill="#5a8ad8"/><rect x="11" y="8" width="1" height="6" fill="#3a3aa8"/><rect x="0" y="13" width="7" height="1" fill="#4a7ad0"/><rect x="7" y="13" width="5" height="1" fill="#3a3aa8"/></g></svg>
<div class="t" style="left:48.3px;top:511px;letter-spacing:-0.100px;">ProductAssetModel</div>
<svg style="left:32px;top:527px" width="12" height="14"><g shape-rendering="crispEdges"><rect x="0" y="0" width="12" height="14" fill="#fff"/><rect x="10" y="3" width="1" height="1" fill="#bcd8f2"/><rect x="9" y="4" width="2" height="1" fill="#bcd8f2"/><rect x="9" y="5" width="2" height="1" fill="#bcd8f2"/><rect x="8" y="6" width="3" height="1" fill="#bcd8f2"/><rect x="7" y="7" width="4" height="1" fill="#bcd8f2"/><rect x="6" y="8" width="5" height="1" fill="#bcd8f2"/><rect x="5" y="9" width="6" height="1" fill="#bcd8f2"/><rect x="4" y="10" width="7" height="1" fill="#bcd8f2"/><rect x="3" y="11" width="8" height="1" fill="#bcd8f2"/><rect x="1" y="12" width="10" height="1" fill="#bcd8f2"/><rect x="2" y="2" width="8" height="1" fill="#a0a0d0"/><rect x="2" y="4" width="8" height="1" fill="#a0a0d0"/><rect x="9" y="4" width="1" height="1" fill="#3f6fd2"/><rect x="2" y="6" width="8" height="1" fill="#a0a0d0"/><rect x="8" y="6" width="2" height="1" fill="#3f6fd2"/><rect x="2" y="8" width="8" height="1" fill="#a0a0d0"/><rect x="6" y="8" width="4" height="1" fill="#3f6fd2"/><rect x="2" y="10" width="8" height="1" fill="#a0a0d0"/><rect x="4" y="10" width="6" height="1" fill="#3f6fd2"/><rect x="0" y="0" width="12" height="1" fill="#a6a6da"/><rect x="0" y="0" width="1" height="14" fill="#a6a6da"/><rect x="11" y="0" width="1" height="8" fill="#5a8ad8"/><rect x="11" y="8" width="1" height="6" fill="#3a3aa8"/><rect x="0" y="13" width="7" height="1" fill="#4a7ad0"/><rect x="7" y="13" width="5" height="1" fill="#3a3aa8"/></g></svg>
<div class="t" style="left:48.3px;top:527px;letter-spacing:0.092px;">RationalNumber</div>
<svg style="left:32px;top:543px" width="12" height="14"><g shape-rendering="crispEdges"><rect x="0" y="0" width="12" height="14" fill="#fff"/><rect x="10" y="3" width="1" height="1" fill="#bcd8f2"/><rect x="9" y="4" width="2" height="1" fill="#bcd8f2"/><rect x="9" y="5" width="2" height="1" fill="#bcd8f2"/><rect x="8" y="6" width="3" height="1" fill="#bcd8f2"/><rect x="7" y="7" width="4" height="1" fill="#bcd8f2"/><rect x="6" y="8" width="5" height="1" fill="#bcd8f2"/><rect x="5" y="9" width="6" height="1" fill="#bcd8f2"/><rect x="4" y="10" width="7" height="1" fill="#bcd8f2"/><rect x="3" y="11" width="8" height="1" fill="#bcd8f2"/><rect x="1" y="12" width="10" height="1" fill="#bcd8f2"/><rect x="2" y="2" width="8" height="1" fill="#a0a0d0"/><rect x="2" y="4" width="8" height="1" fill="#a0a0d0"/><rect x="9" y="4" width="1" height="1" fill="#3f6fd2"/><rect x="2" y="6" width="8" height="1" fill="#a0a0d0"/><rect x="8" y="6" width="2" height="1" fill="#3f6fd2"/><rect x="2" y="8" width="8" height="1" fill="#a0a0d0"/><rect x="6" y="8" width="4" height="1" fill="#3f6fd2"/><rect x="2" y="10" width="8" height="1" fill="#a0a0d0"/><rect x="4" y="10" width="6" height="1" fill="#3f6fd2"/><rect x="0" y="0" width="12" height="1" fill="#a6a6da"/><rect x="0" y="0" width="1" height="14" fill="#a6a6da"/><rect x="11" y="0" width="1" height="8" fill="#5a8ad8"/><rect x="11" y="8" width="1" height="6" fill="#3a3aa8"/><rect x="0" y="13" width="7" height="1" fill="#4a7ad0"/><rect x="7" y="13" width="5" height="1" fill="#3a3aa8"/></g></svg>
<div class="t" style="left:48.3px;top:543px;letter-spacing:0.242px;">ReadingInterharmonic</div>
<svg style="left:32px;top:559px" width="12" height="14"><g shape-rendering="crispEdges"><rect x="0" y="0" width="12" height="14" fill="#fff"/><rect x="10" y="3" width="1" height="1" fill="#bcd8f2"/><rect x="9" y="4" width="2" height="1" fill="#bcd8f2"/><rect x="9" y="5" width="2" height="1" fill="#bcd8f2"/><rect x="8" y="6" width="3" height="1" fill="#bcd8f2"/><rect x="7" y="7" width="4" height="1" fill="#bcd8f2"/><rect x="6" y="8" width="5" height="1" fill="#bcd8f2"/><rect x="5" y="9" width="6" height="1" fill="#bcd8f2"/><rect x="4" y="10" width="7" height="1" fill="#bcd8f2"/><rect x="3" y="11" width="8" height="1" fill="#bcd8f2"/><rect x="1" y="12" width="10" height="1" fill="#bcd8f2"/><rect x="2" y="4" width="8" height="1" fill="#a0a0d0"/><rect x="9" y="4" width="1" height="1" fill="#3f6fd2"/><rect x="2" y="6" width="8" height="1" fill="#a0a0d0"/><rect x="8" y="6" width="2" height="1" fill="#3f6fd2"/><rect x="2" y="8" width="8" height="1" fill="#a0a0d0"/><rect x="6" y="8" width="4" height="1" fill="#3f6fd2"/><rect x="2" y="10" width="8" height="1" fill="#a0a0d0"/><rect x="4" y="10" width="6" height="1" fill="#3f6fd2"/><rect x="0" y="0" width="12" height="1" fill="#3a32a0"/><rect x="0" y="0" width="1" height="14" fill="#3a32a0"/><rect x="11" y="0" width="1" height="14" fill="#3a32a0"/><rect x="0" y="13" width="12" height="1" fill="#3a32a0"/><rect x="1" y="1" width="10" height="1" fill="#f05050"/><rect x="1" y="2" width="10" height="1" fill="#3a32a0"/></g></svg>
<div class="t" style="left:48.3px;top:559px;letter-spacing:0.130px;">ReadingType</div>
<svg style="left:32px;top:575px" width="12" height="14"><g shape-rendering="crispEdges"><rect x="0" y="0" width="12" height="14" fill="#fff"/><rect x="10" y="3" width="1" height="1" fill="#bcd8f2"/><rect x="9" y="4" width="2" height="1" fill="#bcd8f2"/><rect x="9" y="5" width="2" height="1" fill="#bcd8f2"/><rect x="8" y="6" width="3" height="1" fill="#bcd8f2"/><rect x="7" y="7" width="4" height="1" fill="#bcd8f2"/><rect x="6" y="8" width="5" height="1" fill="#bcd8f2"/><rect x="5" y="9" width="6" height="1" fill="#bcd8f2"/><rect x="4" y="10" width="7" height="1" fill="#bcd8f2"/><rect x="3" y="11" width="8" height="1" fill="#bcd8f2"/><rect x="1" y="12" width="10" height="1" fill="#bcd8f2"/><rect x="2" y="2" width="8" height="1" fill="#a0a0d0"/><rect x="2" y="4" width="8" height="1" fill="#a0a0d0"/><rect x="9" y="4" width="1" height="1" fill="#3f6fd2"/><rect x="2" y="6" width="8" height="1" fill="#a0a0d0"/><rect x="8" y="6" width="2" height="1" fill="#3f6fd2"/><rect x="2" y="8" width="8" height="1" fill="#a0a0d0"/><rect x="6" y="8" width="4" height="1" fill="#3f6fd2"/><rect x="2" y="10" width="8" height="1" fill="#a0a0d0"/><rect x="4" y="10" width="6" height="1" fill="#3f6fd2"/><rect x="0" y="0" width="12" height="1" fill="#a6a6da"/><rect x="0" y="0" width="1" height="14" fill="#a6a6da"/><rect x="11" y="0" width="1" height="8" fill="#5a8ad8"/><rect x="11" y="8" width="1" height="6" fill="#3a3aa8"/><rect x="0" y="13" width="7" height="1" fill="#4a7ad0"/><rect x="7" y="13" width="5" height="1" fill="#3a3aa8"/></g></svg>
<div class="t" style="left:48.3px;top:575px;letter-spacing:-0.078px;">RealEnergy</div>
<svg style="left:32px;top:591px" width="12" height="14"><g shape-rendering="crispEdges"><rect x="0" y="0" width="12" height="14" fill="#fff"/><rect x="10" y="3" width="1" height="1" fill="#bcd8f2"/><rect x="9" y="4" width="2" height="1" fill="#bcd8f2"/><rect x="9" y="5" width="2" height="1" fill="#bcd8f2"/><rect x="8" y="6" width="3" height="1" fill="#bcd8f2"/><rect x="7" y="7" width="4" height="1" fill="#bcd8f2"/><rect x="6" y="8" width="5" height="1" fill="#bcd8f2"/><rect x="5" y="9" width="6" height="1" fill="#bcd8f2"/><rect x="4" y="10" width="7" height="1" fill="#bcd8f2"/><rect x="3" y="11" width="8" height="1" fill="#bcd8f2"/><rect x="1" y="12" width="10" height="1" fill="#bcd8f2"/><rect x="2" y="2" width="8" height="1" fill="#a0a0d0"/><rect x="2" y="4" width="8" height="1" fill="#a0a0d0"/><rect x="9" y="4" width="1" height="1" fill="#3f6fd2"/><rect x="2" y="6" width="8" height="1" fill="#a0a0d0"/><rect x="8" y="6" width="2" height="1" fill="#3f6fd2"/><rect x="2" y="8" width="8" height="1" fill="#a0a0d0"/><rect x="6" y="8" width="4" height="1" fill="#3f6fd2"/><rect x="2" y="10" width="8" height="1" fill="#a0a0d0"/><rect x="4" y="10" width="6" height="1" fill="#3f6fd2"/><rect x="0" y="0" width="12" height="1" fill="#a6a6da"/><rect x="0" y="0" width="1" height="14" fill="#a6a6da"/><rect x="11" y="0" width="1" height="8" fill="#5a8ad8"/><rect x="11" y="8" width="1" height="6" fill="#3a3aa8"/><rect x="0" y="13" width="7" height="1" fill="#4a7ad0"/><rect x="7" y="13" width="5" height="1" fill="#3a3aa8"/></g></svg>
<div class="t" style="left:48.3px;top:591px;letter-spacing:0.071px;">Register</div>
<svg style="left:32px;top:607px" width="12" height="14"><g shape-rendering="crispEdges"><rect x="0" y="0" width="12" height="14" fill="#fff"/><rect x="10" y="3" width="1" height="1" fill="#bcd8f2"/><rect x="9" y="4" width="2" height="1" fill="#bcd8f2"/><rect x="9" y="5" width="2" height="1" fill="#bcd8f2"/><rect x="8" y="6" width="3" height="1" fill="#bcd8f2"/><rect x="7" y="7" width="4" height="1" fill="#bcd8f2"/><rect x="6" y="8" width="5" height="1" fill="#bcd8f2"/><rect x="5" y="9" width="6" height="1" fill="#bcd8f2"/><rect x="4" y="10" width="7" height="1" fill="#bcd8f2"/><rect x="3" y="11" width="8" height="1" fill="#bcd8f2"/><rect x="1" y="12" width="10" height="1" fill="#bcd8f2"/><rect x="2" y="2" width="8" height="1" fill="#a0a0d0"/><rect x="2" y="4" width="8" height="1" fill="#a0a0d0"/><rect x="9" y="4" width="1" height="1" fill="#3f6fd2"/><rect x="2" y="6" width="8" height="1" fill="#a0a0d0"/><rect x="8" y="6" width="2" height="1" fill="#3f6fd2"/><rect x="2" y="8" width="8" height="1" fill="#a0a0d0"/><rect x="6" y="8" width="4" height="1" fill="#3f6fd2"/><rect x="2" y="10" width="8" height="1" fill="#a0a0d0"/><rect x="4" y="10" width="6" height="1" fill="#3f6fd2"/><rect x="0" y="0" width="12" height="1" fill="#a6a6da"/><rect x="0" y="0" width="1" height="14" fill="#a6a6da"/><rect x="11" y="0" width="1" height="8" fill="#5a8ad8"/><rect x="11" y="8" width="1" height="6" fill="#3a3aa8"/><rect x="0" y="13" width="7" height="1" fill="#4a7ad0"/><rect x="7" y="13" width="5" height="1" fill="#3a3aa8"/></g></svg>
<div class="t" style="left:48.3px;top:607px;letter-spacing:0.054px;">RemoteConnectDisconnectInfo</div>
<svg style="left:32px;top:623px" width="12" height="14"><g shape-rendering="crispEdges"><rect x="0" y="0" width="12" height="14" fill="#fff"/><rect x="10" y="3" width="1" height="1" fill="#bcd8f2"/><rect x="9" y="4" width="2" height="1" fill="#bcd8f2"/><rect x="9" y="5" width="2" height="1" fill="#bcd8f2"/><rect x="8" y="6" width="3" height="1" fill="#bcd8f2"/><rect x="7" y="7" width="4" height="1" fill="#bcd8f2"/><rect x="6" y="8" width="5" height="1" fill="#bcd8f2"/><rect x="5" y="9" width="6" height="1" fill="#bcd8f2"/><rect x="4" y="10" width="7" height="1" fill="#bcd8f2"/><rect x="3" y="11" width="8" height="1" fill="#bcd8f2"/><rect x="1" y="12" width="10" height="1" fill="#bcd8f2"/><rect x="2" y="2" width="8" height="1" fill="#a0a0d0"/><rect x="2" y="4" width="8" height="1" fill="#a0a0d0"/><rect x="9" y="4" width="1" height="1" fill="#3f6fd2"/><rect x="2" y="6" width="8" height="1" fill="#a0a0d0"/><rect x="8" y="6" width="2" height="1" fill="#3f6fd2"/><rect x="2" y="8" width="8" height="1" fill="#a0a0d0"/><rect x="6" y="8" width="4" height="1" fill="#3f6fd2"/><rect x="2" y="10" width="8" height="1" fill="#a0a0d0"/><rect x="4" y="10" width="6" height="1" fill="#3f6fd2"/><rect x="0" y="0" width="12" height="1" fill="#a6a6da"/><rect x="0" y="0" width="1" height="14" fill="#a6a6da"/><rect x="11" y="0" width="1" height="8" fill="#5a8ad8"/><rect x="11" y="8" width="1" height="6" fill="#3a3aa8"/><rect x="0" y="13" width="7" height="1" fill="#4a7ad0"/><rect x="7" y="13" width="5" height="1" fill="#3a3aa8"/></g></svg>
<div class="t" style="left:48.3px;top:623px;">Seal</div>
<svg style="left:32px;top:639px" width="12" height="14"><g shape-rendering="crispEdges"><rect x="0" y="0" width="12" height="14" fill="#fff"/><rect x="10" y="3" width="1" height="1" fill="#bcd8f2"/><rect x="9" y="4" width="2" height="1" fill="#bcd8f2"/><rect x="9" y="5" width="2" height="1" fill="#bcd8f2"/><rect x="8" y="6" width="3" height="1" fill="#bcd8f2"/><rect x="7" y="7" width="4" height="1" fill="#bcd8f2"/><rect x="6" y="8" width="5" height="1" fill="#bcd8f2"/><rect x="5" y="9" width="6" height="1" fill="#bcd8f2"/><rect x="4" y="10" width="7" height="1" fill="#bcd8f2"/><rect x="3" y="11" width="8" height="1" fill="#bcd8f2"/><rect x="1" y="12" width="10" height="1" fill="#bcd8f2"/><rect x="0" y="0" width="12" height="1" fill="#5a78c4"/><rect x="0" y="0" width="1" height="14" fill="#5a78c4"/><rect x="11" y="0" width="1" height="14" fill="#463ea0"/><rect x="0" y="13" width="12" height="1" fill="#463ea0"/><rect x="2" y="2" width="1" height="5" fill="#d42840"/><rect x="2" y="2" width="3" height="1" fill="#d42840"/><rect x="2" y="4" width="3" height="1" fill="#d42840"/><rect x="2" y="6" width="3" height="1" fill="#d42840"/><rect x="7" y="2" width="4" height="1" fill="#3a6ad0"/><rect x="7" y="4" width="1" height="1" fill="#3aa0a0"/><rect x="8" y="4" width="2" height="1" fill="#3a6ad0"/><rect x="7" y="6" width="3" height="1" fill="#3a6ad0"/><rect x="1" y="9" width="10" height="1" fill="#3a6ad0"/><rect x="2" y="11" width="2" height="1" fill="#3aa0a0"/><rect x="4" y="11" width="6" height="1" fill="#3a6ad0"/></g></svg>
<div class="t" style="left:48.3px;top:639px;letter-spacing:0.025px;">SealConditionKind</div>
<div style="position:absolute;left:274px;top:207px;width:16px;height:447px;background:#cdcdcd"></div>
<div style="position:absolute;left:274px;top:207px;width:16px;height:16px;border:1px solid #bfbfbf;background:#fcfcfc"></div>
<svg style="left:278px;top:213px" width="9" height="5"><path d="M0 5L4.5 0L9 5Z" fill="#6e6e6e"/></svg>
<div style="position:absolute;left:274px;top:638px;width:16px;height:16px;border:1px solid #bfbfbf;background:#fcfcfc"></div>
<svg style="left:278px;top:644.5px" width="9" height="5"><path d="M0 0L4.5 5L9 0Z" fill="#6e6e6e"/></svg>
<div style="position:absolute;left:274px;top:292px;width:16px;height:267px;border:1px solid #bfbfbf;background:#fcfcfc"></div>
<div style="position:absolute;left:290px;top:207px;width:1px;height:447px;background:#d6d2ca"></div>
<div style="position:absolute;left:290px;top:223px;width:1px;height:415px;background:repeating-linear-gradient(to bottom,#b0a89c 0 1px,#fff 1px 2px)"></div>
<div style="position:absolute;left:290px;top:292px;width:1px;height:267px;background:#c9c4bc"></div>
<div style="position:absolute;left:290px;top:222px;width:1px;height:1px;background:#333"></div>
<div style="position:absolute;left:290px;top:558px;width:1px;height:1px;background:#333"></div>
<div style="position:absolute;left:290px;top:653px;width:1px;height:1px;background:#333"></div>
<div class="t" style="left:11.5px;top:682px;letter-spacing:-0.219px;">Metering.IEC61968.EndDevice</div>
<div class="t" style="left:309.5px;top:682px;">Select:</div>
<div style="position:absolute;left:354px;top:681px;width:41px;height:20px;border:1px solid #adadad;background:#fcfcfc"></div>
<div class="t" style="left:354px;top:684px;width:41px;text-align:center">All</div>
<div style="position:absolute;left:403px;top:681px;width:41px;height:20px;border:1px solid #adadad;background:#fcfcfc"></div>
<div class="t" style="left:403px;top:684px;width:41px;text-align:center">None</div>
<div style="position:absolute;left:304px;top:206px;width:411px;height:451px;border:1px solid #d0d0d0;background:#fcfcfc"></div>
<div style="position:absolute;left:305px;top:207px;width:409px;height:22px;background:#e5e5e5"></div>
<div style="position:absolute;left:305px;top:229px;width:409px;height:1px;background:#bdbdbd"></div>
<div style="position:absolute;left:338px;top:208px;width:1px;height:20px;background:#d8d8d8"></div>
<div class="t" style="left:344px;top:210.5px;">EndDevice</div>
<div style="position:absolute;left:306px;top:231px;width:33px;height:19px;background:#e5e5e5"></div>
<div style="position:absolute;left:340px;top:231px;width:298px;height:19px;background:#e5e5e5"></div>
<div class="t" style="left:343.3px;top:232.5px;">Inheritance</div>
<div style="position:absolute;left:327px;top:254px;width:12px;height:12px;border:1px solid #999;background:#fcfcfc"></div>
<div class="t" style="left:343.3px;top:252.5px;">AssetContainer</div>
<div style="position:absolute;left:306px;top:271px;width:33px;height:19px;background:#e5e5e5"></div>
<div style="position:absolute;left:340px;top:271px;width:298px;height:19px;background:#e5e5e5"></div>
<div class="t" style="left:343.3px;top:272.5px;">EndDevice.Attributes</div>
<div style="position:absolute;left:327px;top:294px;width:12px;height:12px;border:1px solid #999;background:#fcfcfc"></div>
<svg style="left:327px;top:294px" width="12" height="12"><path d="M3.3 5.3 L5.5 8.3 L9.6 3.4" fill="none" stroke="#585858" stroke-width="1.3"/></svg>
<div class="t" style="left:343.3px;top:292.5px;letter-spacing:-0.280px;">amrSystem : String</div>
<div style="position:absolute;left:327px;top:314px;width:12px;height:12px;border:1px solid #999;background:#fcfcfc"></div>
<svg style="left:327px;top:314px" width="12" height="12"><path d="M3.3 5.3 L5.5 8.3 L9.6 3.4" fill="none" stroke="#585858" stroke-width="1.3"/></svg>
<div class="t" style="left:343.3px;top:312.5px;">installCode : String</div>
<div style="position:absolute;left:327px;top:334px;width:12px;height:12px;border:1px solid #999;background:#fcfcfc"></div>
<svg style="left:327px;top:334px" width="12" height="12"><path d="M3.3 5.3 L5.5 8.3 L9.6 3.4" fill="none" stroke="#585858" stroke-width="1.3"/></svg>
<div class="t" style="left:343.3px;top:332.5px;letter-spacing:-0.200px;">isPan : Boolean</div>
<div style="position:absolute;left:327px;top:354px;width:12px;height:12px;border:1px solid #999;background:#fcfcfc"></div>
<div class="t" style="left:343.3px;top:352.5px;">isSmartInverter : Boolean</div>
<div style="position:absolute;left:327px;top:374px;width:12px;height:12px;border:1px solid #999;background:#fcfcfc"></div>
<svg style="left:327px;top:374px" width="12" height="12"><path d="M3.3 5.3 L5.5 8.3 L9.6 3.4" fill="none" stroke="#585858" stroke-width="1.3"/></svg>
<div class="t" style="left:343.3px;top:372.5px;">isVirtual : Boolean</div>
<div style="position:absolute;left:327px;top:394px;width:12px;height:12px;border:1px solid #999;background:#fcfcfc"></div>
<svg style="left:327px;top:394px" width="12" height="12"><path d="M3.3 5.3 L5.5 8.3 L9.6 3.4" fill="none" stroke="#585858" stroke-width="1.3"/></svg>
<div class="t" style="left:343.3px;top:392.5px;">timeZoneOffset : Minutes</div>
<div style="position:absolute;left:306px;top:411px;width:33px;height:19px;background:#e5e5e5"></div>
<div style="position:absolute;left:340px;top:411px;width:298px;height:19px;background:#e5e5e5"></div>
<div class="t" style="left:343.3px;top:412.5px;">EndDevice.Associations</div>
<div style="position:absolute;left:327px;top:434px;width:12px;height:12px;border:1px solid #999;background:#fcfcfc"></div>
<div class="t" style="left:343.3px;top:432.5px;letter-spacing:-0.180px;">Customer : Customer</div>
<div style="position:absolute;left:327px;top:454px;width:12px;height:12px;border:1px solid #999;background:#fcfcfc"></div>
<div class="t" style="left:343.3px;top:452.5px;letter-spacing:-0.100px;">DispatchablePowerCapability : DispatchablePowerCapability</div>
<div style="position:absolute;left:327px;top:474px;width:12px;height:12px;border:1px solid #999;background:#fcfcfc"></div>
<div class="t" style="left:343.3px;top:472.5px;letter-spacing:-0.100px;">EndDeviceControls : EndDeviceControl</div>
<div style="position:absolute;left:327px;top:494px;width:12px;height:12px;border:1px solid #999;background:#fcfcfc"></div>
<div class="t" style="left:343.3px;top:492.5px;letter-spacing:-0.150px;">EndDeviceEvents : EndDeviceEvent</div>
<div style="position:absolute;left:322px;top:511px;width:17px;height:19px;background:#e9e9e9"></div>
<div style="position:absolute;left:339px;top:511px;width:120px;height:19px;background:#d3d3d3"></div>
<div style="position:absolute;left:322px;top:510.5px;width:140px;height:19.5px;border:1px dotted #333"></div>
<div style="position:absolute;left:327px;top:514px;width:12px;height:12px;border:1px solid #999;background:#fcfcfc"></div>
<svg style="left:327px;top:514px" width="12" height="12"><path d="M3.3 5.3 L5.5 8.3 L9.6 3.4" fill="none" stroke="#585858" stroke-width="1.3"/></svg>
<div class="t" style="left:343.3px;top:512.5px;letter-spacing:-0.100px;">EndDeviceFunctions : EndDeviceFunction</div>
<div style="position:absolute;left:327px;top:534px;width:12px;height:12px;border:1px solid #999;background:#fcfcfc"></div>
<div class="t" style="left:343.3px;top:532.5px;letter-spacing:-0.100px;">EndDeviceGroups : EndDeviceGroup</div>
<div style="position:absolute;left:327px;top:554px;width:12px;height:12px;border:1px solid #999;background:#fcfcfc"></div>
<svg style="left:327px;top:554px" width="12" height="12"><path d="M3.3 5.3 L5.5 8.3 L9.6 3.4" fill="none" stroke="#585858" stroke-width="1.3"/></svg>
<div class="t" style="left:343.3px;top:552.5px;letter-spacing:-0.100px;">EndDeviceInfo : EndDeviceInfo</div>
<div style="position:absolute;left:327px;top:574px;width:12px;height:12px;border:1px solid #999;background:#fcfcfc"></div>
<div class="t" style="left:343.3px;top:572.5px;letter-spacing:-0.100px;">ServiceLocation : ServiceLocation</div>
<div style="position:absolute;left:327px;top:594px;width:12px;height:12px;border:1px solid #999;background:#fcfcfc"></div>
<div class="t" style="left:343.3px;top:592.5px;letter-spacing:-0.200px;">UsagePoint : UsagePoint</div>
<div style="position:absolute;left:306px;top:611px;width:33px;height:19px;background:#e5e5e5"></div>
<div style="position:absolute;left:340px;top:611px;width:298px;height:19px;background:#e5e5e5"></div>
<div class="t" style="left:343.3px;top:612.5px;letter-spacing:0.080px;">AssetContainer.Attributes</div>
<div style="position:absolute;left:306px;top:631px;width:33px;height:19px;background:#e5e5e5"></div>
<div style="position:absolute;left:340px;top:631px;width:298px;height:19px;background:#e5e5e5"></div>
<div class="t" style="left:343.3px;top:632.5px;">AssetContainer.Associations</div>
<div style="position:absolute;left:723px;top:206px;width:404px;height:449px;border:1px solid #d0d0d0;background:#fcfcfc"></div>
<div class="abs" style="left:724px;top:207px;width:386px;height:447px;overflow:hidden">
<svg style="left:40px;top:2px" width="12" height="14"><g shape-rendering="crispEdges"><rect x="0" y="0" width="12" height="14" fill="#fff"/><rect x="10" y="3" width="1" height="1" fill="#bcd8f2"/><rect x="9" y="4" width="2" height="1" fill="#bcd8f2"/><rect x="9" y="5" width="2" height="1" fill="#bcd8f2"/><rect x="8" y="6" width="3" height="1" fill="#bcd8f2"/><rect x="7" y="7" width="4" height="1" fill="#bcd8f2"/><rect x="6" y="8" width="5" height="1" fill="#bcd8f2"/><rect x="5" y="9" width="6" height="1" fill="#bcd8f2"/><rect x="4" y="10" width="7" height="1" fill="#bcd8f2"/><rect x="3" y="11" width="8" height="1" fill="#bcd8f2"/><rect x="1" y="12" width="10" height="1" fill="#bcd8f2"/><rect x="2" y="4" width="8" height="1" fill="#a0a0d0"/><rect x="9" y="4" width="1" height="1" fill="#3f6fd2"/><rect x="2" y="6" width="8" height="1" fill="#a0a0d0"/><rect x="8" y="6" width="2" height="1" fill="#3f6fd2"/><rect x="2" y="8" width="8" height="1" fill="#a0a0d0"/><rect x="6" y="8" width="4" height="1" fill="#3f6fd2"/><rect x="2" y="10" width="8" height="1" fill="#a0a0d0"/><rect x="4" y="10" width="6" height="1" fill="#3f6fd2"/><rect x="0" y="0" width="12" height="1" fill="#3a32a0"/><rect x="0" y="0" width="1" height="14" fill="#3a32a0"/><rect x="11" y="0" width="1" height="14" fill="#3a32a0"/><rect x="0" y="13" width="12" height="1" fill="#3a32a0"/><rect x="1" y="1" width="10" height="1" fill="#f05050"/><rect x="1" y="2" width="10" height="1" fill="#3a32a0"/></g></svg>
<div class="t" style="right:174.70px;top:1.5px;">ConnectDisconnectFunction</div>
<svg style="left:40px;top:22px" width="12" height="14"><g shape-rendering="crispEdges"><rect x="0" y="0" width="12" height="14" fill="#fff"/><rect x="10" y="3" width="1" height="1" fill="#bcd8f2"/><rect x="9" y="4" width="2" height="1" fill="#bcd8f2"/><rect x="9" y="5" width="2" height="1" fill="#bcd8f2"/><rect x="8" y="6" width="3" height="1" fill="#bcd8f2"/><rect x="7" y="7" width="4" height="1" fill="#bcd8f2"/><rect x="6" y="8" width="5" height="1" fill="#bcd8f2"/><rect x="5" y="9" width="6" height="1" fill="#bcd8f2"/><rect x="4" y="10" width="7" height="1" fill="#bcd8f2"/><rect x="3" y="11" width="8" height="1" fill="#bcd8f2"/><rect x="1" y="12" width="10" height="1" fill="#bcd8f2"/><rect x="0" y="0" width="12" height="1" fill="#5a78c4"/><rect x="0" y="0" width="1" height="14" fill="#5a78c4"/><rect x="11" y="0" width="1" height="14" fill="#463ea0"/><rect x="0" y="13" width="12" height="1" fill="#463ea0"/><rect x="2" y="2" width="1" height="5" fill="#d42840"/><rect x="2" y="2" width="3" height="1" fill="#d42840"/><rect x="2" y="4" width="3" height="1" fill="#d42840"/><rect x="2" y="6" width="3" height="1" fill="#d42840"/><rect x="7" y="2" width="4" height="1" fill="#3a6ad0"/><rect x="7" y="4" width="1" height="1" fill="#3aa0a0"/><rect x="8" y="4" width="2" height="1" fill="#3a6ad0"/><rect x="7" y="6" width="3" height="1" fill="#3a6ad0"/><rect x="1" y="9" width="10" height="1" fill="#3a6ad0"/><rect x="2" y="11" width="2" height="1" fill="#3aa0a0"/><rect x="4" y="11" width="6" height="1" fill="#3a6ad0"/></g></svg>
<div class="t" style="right:198.00px;top:21.5px;">CorporateStandardKind</div>
<svg style="left:40px;top:42px" width="12" height="14"><g shape-rendering="crispEdges"><rect x="0" y="0" width="12" height="14" fill="#fff"/><rect x="10" y="3" width="1" height="1" fill="#bcd8f2"/><rect x="9" y="4" width="2" height="1" fill="#bcd8f2"/><rect x="9" y="5" width="2" height="1" fill="#bcd8f2"/><rect x="8" y="6" width="3" height="1" fill="#bcd8f2"/><rect x="7" y="7" width="4" height="1" fill="#bcd8f2"/><rect x="6" y="8" width="5" height="1" fill="#bcd8f2"/><rect x="5" y="9" width="6" height="1" fill="#bcd8f2"/><rect x="4" y="10" width="7" height="1" fill="#bcd8f2"/><rect x="3" y="11" width="8" height="1" fill="#bcd8f2"/><rect x="1" y="12" width="10" height="1" fill="#bcd8f2"/><rect x="2" y="2" width="8" height="1" fill="#a0a0d0"/><rect x="2" y="4" width="8" height="1" fill="#a0a0d0"/><rect x="9" y="4" width="1" height="1" fill="#3f6fd2"/><rect x="2" y="6" width="8" height="1" fill="#a0a0d0"/><rect x="8" y="6" width="2" height="1" fill="#3f6fd2"/><rect x="2" y="8" width="8" height="1" fill="#a0a0d0"/><rect x="6" y="8" width="4" height="1" fill="#3f6fd2"/><rect x="2" y="10" width="8" height="1" fill="#a0a0d0"/><rect x="4" y="10" width="6" height="1" fill="#3f6fd2"/><rect x="0" y="0" width="12" height="1" fill="#a6a6da"/><rect x="0" y="0" width="1" height="14" fill="#a6a6da"/><rect x="11" y="0" width="1" height="8" fill="#5a8ad8"/><rect x="11" y="8" width="1" height="6" fill="#3a3aa8"/><rect x="0" y="13" width="7" height="1" fill="#4a7ad0"/><rect x="7" y="13" width="5" height="1" fill="#3a3aa8"/></g></svg>
<div class="t" style="right:261.60px;top:41.5px;">CurrentFlow</div>
<svg style="left:40px;top:62px" width="12" height="14"><g shape-rendering="crispEdges"><rect x="0" y="0" width="12" height="14" fill="#fff"/><rect x="10" y="3" width="1" height="1" fill="#bcd8f2"/><rect x="9" y="4" width="2" height="1" fill="#bcd8f2"/><rect x="9" y="5" width="2" height="1" fill="#bcd8f2"/><rect x="8" y="6" width="3" height="1" fill="#bcd8f2"/><rect x="7" y="7" width="4" height="1" fill="#bcd8f2"/><rect x="6" y="8" width="5" height="1" fill="#bcd8f2"/><rect x="5" y="9" width="6" height="1" fill="#bcd8f2"/><rect x="4" y="10" width="7" height="1" fill="#bcd8f2"/><rect x="3" y="11" width="8" height="1" fill="#bcd8f2"/><rect x="1" y="12" width="10" height="1" fill="#bcd8f2"/><rect x="2" y="2" width="8" height="1" fill="#a0a0d0"/><rect x="2" y="4" width="8" height="1" fill="#a0a0d0"/><rect x="9" y="4" width="1" height="1" fill="#3f6fd2"/><rect x="2" y="6" width="8" height="1" fill="#a0a0d0"/><rect x="8" y="6" width="2" height="1" fill="#3f6fd2"/><rect x="2" y="8" width="8" height="1" fill="#a0a0d0"/><rect x="6" y="8" width="4" height="1" fill="#3f6fd2"/><rect x="2" y="10" width="8" height="1" fill="#a0a0d0"/><rect x="4" y="10" width="6" height="1" fill="#3f6fd2"/><rect x="0" y="0" width="12" height="1" fill="#a6a6da"/><rect x="0" y="0" width="1" height="14" fill="#a6a6da"/><rect x="11" y="0" width="1" height="8" fill="#5a8ad8"/><rect x="11" y="8" width="1" height="6" fill="#3a3aa8"/><rect x="0" y="13" width="7" height="1" fill="#4a7ad0"/><rect x="7" y="13" width="5" height="1" fill="#3a3aa8"/></g></svg>
<div class="t" style="right:231.80px;top:61.5px;">DateTimeInterval</div>
<svg style="left:40px;top:82px" width="12" height="14"><g shape-rendering="crispEdges"><rect x="0" y="0" width="12" height="14" fill="#fff"/><rect x="10" y="3" width="1" height="1" fill="#bcd8f2"/><rect x="9" y="4" width="2" height="1" fill="#bcd8f2"/><rect x="9" y="5" width="2" height="1" fill="#bcd8f2"/><rect x="8" y="6" width="3" height="1" fill="#bcd8f2"/><rect x="7" y="7" width="4" height="1" fill="#bcd8f2"/><rect x="6" y="8" width="5" height="1" fill="#bcd8f2"/><rect x="5" y="9" width="6" height="1" fill="#bcd8f2"/><rect x="4" y="10" width="7" height="1" fill="#bcd8f2"/><rect x="3" y="11" width="8" height="1" fill="#bcd8f2"/><rect x="1" y="12" width="10" height="1" fill="#bcd8f2"/><rect x="2" y="2" width="8" height="1" fill="#a0a0d0"/><rect x="2" y="4" width="8" height="1" fill="#a0a0d0"/><rect x="9" y="4" width="1" height="1" fill="#3f6fd2"/><rect x="2" y="6" width="8" height="1" fill="#a0a0d0"/><rect x="8" y="6" width="2" height="1" fill="#3f6fd2"/><rect x="2" y="8" width="8" height="1" fill="#a0a0d0"/><rect x="6" y="8" width="4" height="1" fill="#3f6fd2"/><rect x="2" y="10" width="8" height="1" fill="#a0a0d0"/><rect x="4" y="10" width="6" height="1" fill="#3f6fd2"/><rect x="0" y="0" width="12" height="1" fill="#a6a6da"/><rect x="0" y="0" width="1" height="14" fill="#a6a6da"/><rect x="11" y="0" width="1" height="8" fill="#5a8ad8"/><rect x="11" y="8" width="1" height="6" fill="#3a3aa8"/><rect x="0" y="13" width="7" height="1" fill="#4a7ad0"/><rect x="7" y="13" width="5" height="1" fill="#3a3aa8"/></g></svg>
<div class="t" style="right:229.10px;top:81.5px;">ElectronicAddress</div>
<svg style="left:40px;top:102px" width="12" height="14"><g shape-rendering="crispEdges"><rect x="0" y="0" width="12" height="14" fill="#fff"/><rect x="10" y="3" width="1" height="1" fill="#bcd8f2"/><rect x="9" y="4" width="2" height="1" fill="#bcd8f2"/><rect x="9" y="5" width="2" height="1" fill="#bcd8f2"/><rect x="8" y="6" width="3" height="1" fill="#bcd8f2"/><rect x="7" y="7" width="4" height="1" fill="#bcd8f2"/><rect x="6" y="8" width="5" height="1" fill="#bcd8f2"/><rect x="5" y="9" width="6" height="1" fill="#bcd8f2"/><rect x="4" y="10" width="7" height="1" fill="#bcd8f2"/><rect x="3" y="11" width="8" height="1" fill="#bcd8f2"/><rect x="1" y="12" width="10" height="1" fill="#bcd8f2"/><rect x="2" y="4" width="8" height="1" fill="#a0a0d0"/><rect x="9" y="4" width="1" height="1" fill="#3f6fd2"/><rect x="2" y="6" width="8" height="1" fill="#a0a0d0"/><rect x="8" y="6" width="2" height="1" fill="#3f6fd2"/><rect x="2" y="8" width="8" height="1" fill="#a0a0d0"/><rect x="6" y="8" width="4" height="1" fill="#3f6fd2"/><rect x="2" y="10" width="8" height="1" fill="#a0a0d0"/><rect x="4" y="10" width="6" height="1" fill="#3f6fd2"/><rect x="0" y="0" width="12" height="1" fill="#3a32a0"/><rect x="0" y="0" width="1" height="14" fill="#3a32a0"/><rect x="11" y="0" width="1" height="14" fill="#3a32a0"/><rect x="0" y="13" width="12" height="1" fill="#3a32a0"/><rect x="1" y="1" width="10" height="1" fill="#f05050"/><rect x="1" y="2" width="10" height="1" fill="#3a32a0"/></g></svg>
<div class="t" style="right:271.10px;top:101.5px;">EndDevice</div>
<div class="t" style="right:84.40px;top:121.5px;">EndDeviceFunctions : EndDeviceFunction</div>
<div class="t" style="right:27.20px;top:121.5px;letter-spacing:0.5px;">[0..*] (m)</div>
<div class="t" style="right:139.90px;top:141.5px;">EndDeviceInfo : EndDeviceInfo</div>
<div class="t" style="right:106.25px;top:141.5px;letter-spacing:0.35px;">[0..1]</div>
<div class="t" style="right:204.90px;top:161.5px;">amrSystem : String</div>
<div class="t" style="right:170.65px;top:161.5px;letter-spacing:0.35px;">[0..1]</div>
<div class="t" style="right:206.70px;top:181.5px;">installCode : String</div>
<div class="t" style="right:172.95px;top:181.5px;letter-spacing:0.35px;">[0..1]</div>
<div class="t" style="right:226.20px;top:201.5px;">isPan : Boolean</div>
<div class="t" style="right:191.65px;top:201.5px;letter-spacing:0.35px;">[0..1]</div>
<div class="t" style="right:211.40px;top:221.5px;">isVirtual : Boolean</div>
<div class="t" style="right:176.55px;top:221.5px;letter-spacing:0.35px;">[0..1]</div>
<div class="t" style="right:170.00px;top:241.5px;">timeZoneOffset : Minutes</div>
<div class="t" style="right:135.95px;top:241.5px;letter-spacing:0.35px;">[0..1]</div>
<svg style="left:40px;top:262px" width="12" height="14"><g shape-rendering="crispEdges"><rect x="0" y="0" width="12" height="14" fill="#fff"/><rect x="10" y="3" width="1" height="1" fill="#bcd8f2"/><rect x="9" y="4" width="2" height="1" fill="#bcd8f2"/><rect x="9" y="5" width="2" height="1" fill="#bcd8f2"/><rect x="8" y="6" width="3" height="1" fill="#bcd8f2"/><rect x="7" y="7" width="4" height="1" fill="#bcd8f2"/><rect x="6" y="8" width="5" height="1" fill="#bcd8f2"/><rect x="5" y="9" width="6" height="1" fill="#bcd8f2"/><rect x="4" y="10" width="7" height="1" fill="#bcd8f2"/><rect x="3" y="11" width="8" height="1" fill="#bcd8f2"/><rect x="1" y="12" width="10" height="1" fill="#bcd8f2"/><rect x="2" y="2" width="8" height="1" fill="#a0a0d0"/><rect x="2" y="4" width="8" height="1" fill="#a0a0d0"/><rect x="9" y="4" width="1" height="1" fill="#3f6fd2"/><rect x="2" y="6" width="8" height="1" fill="#a0a0d0"/><rect x="8" y="6" width="2" height="1" fill="#3f6fd2"/><rect x="2" y="8" width="8" height="1" fill="#a0a0d0"/><rect x="6" y="8" width="4" height="1" fill="#3f6fd2"/><rect x="2" y="10" width="8" height="1" fill="#a0a0d0"/><rect x="4" y="10" width="6" height="1" fill="#3f6fd2"/><rect x="0" y="0" width="12" height="1" fill="#a6a6da"/><rect x="0" y="0" width="1" height="14" fill="#a6a6da"/><rect x="11" y="0" width="1" height="8" fill="#5a8ad8"/><rect x="11" y="8" width="1" height="6" fill="#3a3aa8"/><rect x="0" y="13" width="7" height="1" fill="#4a7ad0"/><rect x="7" y="13" width="5" height="1" fill="#3a3aa8"/></g></svg>
<div class="t" style="right:215.60px;top:261.5px;">EndDeviceCapability</div>
<svg style="left:40px;top:282px" width="12" height="14"><g shape-rendering="crispEdges"><rect x="0" y="0" width="12" height="14" fill="#fff"/><rect x="10" y="3" width="1" height="1" fill="#bcd8f2"/><rect x="9" y="4" width="2" height="1" fill="#bcd8f2"/><rect x="9" y="5" width="2" height="1" fill="#bcd8f2"/><rect x="8" y="6" width="3" height="1" fill="#bcd8f2"/><rect x="7" y="7" width="4" height="1" fill="#bcd8f2"/><rect x="6" y="8" width="5" height="1" fill="#bcd8f2"/><rect x="5" y="9" width="6" height="1" fill="#bcd8f2"/><rect x="4" y="10" width="7" height="1" fill="#bcd8f2"/><rect x="3" y="11" width="8" height="1" fill="#bcd8f2"/><rect x="1" y="12" width="10" height="1" fill="#bcd8f2"/><rect x="2" y="2" width="8" height="1" fill="#a0a0d0"/><rect x="2" y="4" width="8" height="1" fill="#a0a0d0"/><rect x="9" y="4" width="1" height="1" fill="#3f6fd2"/><rect x="2" y="6" width="8" height="1" fill="#a0a0d0"/><rect x="8" y="6" width="2" height="1" fill="#3f6fd2"/><rect x="2" y="8" width="8" height="1" fill="#a0a0d0"/><rect x="6" y="8" width="4" height="1" fill="#3f6fd2"/><rect x="2" y="10" width="8" height="1" fill="#a0a0d0"/><rect x="4" y="10" width="6" height="1" fill="#3f6fd2"/><rect x="0" y="0" width="12" height="1" fill="#a6a6da"/><rect x="0" y="0" width="1" height="14" fill="#a6a6da"/><rect x="11" y="0" width="1" height="8" fill="#5a8ad8"/><rect x="11" y="8" width="1" height="6" fill="#3a3aa8"/><rect x="0" y="13" width="7" height="1" fill="#4a7ad0"/><rect x="7" y="13" width="5" height="1" fill="#3a3aa8"/></g></svg>
<div class="t" style="right:224.00px;top:281.5px;">EndDeviceFunction</div>
<svg style="left:40px;top:302px" width="12" height="14"><g shape-rendering="crispEdges"><rect x="0" y="0" width="12" height="14" fill="#fff"/><rect x="10" y="3" width="1" height="1" fill="#bcd8f2"/><rect x="9" y="4" width="2" height="1" fill="#bcd8f2"/><rect x="9" y="5" width="2" height="1" fill="#bcd8f2"/><rect x="8" y="6" width="3" height="1" fill="#bcd8f2"/><rect x="7" y="7" width="4" height="1" fill="#bcd8f2"/><rect x="6" y="8" width="5" height="1" fill="#bcd8f2"/><rect x="5" y="9" width="6" height="1" fill="#bcd8f2"/><rect x="4" y="10" width="7" height="1" fill="#bcd8f2"/><rect x="3" y="11" width="8" height="1" fill="#bcd8f2"/><rect x="1" y="12" width="10" height="1" fill="#bcd8f2"/><rect x="0" y="0" width="12" height="1" fill="#5a78c4"/><rect x="0" y="0" width="1" height="14" fill="#5a78c4"/><rect x="11" y="0" width="1" height="14" fill="#463ea0"/><rect x="0" y="13" width="12" height="1" fill="#463ea0"/><rect x="2" y="2" width="1" height="5" fill="#d42840"/><rect x="2" y="2" width="3" height="1" fill="#d42840"/><rect x="2" y="4" width="3" height="1" fill="#d42840"/><rect x="2" y="6" width="3" height="1" fill="#d42840"/><rect x="7" y="2" width="4" height="1" fill="#3a6ad0"/><rect x="7" y="4" width="1" height="1" fill="#3aa0a0"/><rect x="8" y="4" width="2" height="1" fill="#3a6ad0"/><rect x="7" y="6" width="3" height="1" fill="#3a6ad0"/><rect x="1" y="9" width="10" height="1" fill="#3a6ad0"/><rect x="2" y="11" width="2" height="1" fill="#3aa0a0"/><rect x="4" y="11" width="6" height="1" fill="#3a6ad0"/></g></svg>
<div class="t" style="right:199.80px;top:301.5px;">EndDeviceFunctionKind</div>
<svg style="left:40px;top:322px" width="12" height="14"><g shape-rendering="crispEdges"><rect x="0" y="0" width="12" height="14" fill="#fff"/><rect x="10" y="3" width="1" height="1" fill="#bcd8f2"/><rect x="9" y="4" width="2" height="1" fill="#bcd8f2"/><rect x="9" y="5" width="2" height="1" fill="#bcd8f2"/><rect x="8" y="6" width="3" height="1" fill="#bcd8f2"/><rect x="7" y="7" width="4" height="1" fill="#bcd8f2"/><rect x="6" y="8" width="5" height="1" fill="#bcd8f2"/><rect x="5" y="9" width="6" height="1" fill="#bcd8f2"/><rect x="4" y="10" width="7" height="1" fill="#bcd8f2"/><rect x="3" y="11" width="8" height="1" fill="#bcd8f2"/><rect x="1" y="12" width="10" height="1" fill="#bcd8f2"/><rect x="2" y="2" width="8" height="1" fill="#a0a0d0"/><rect x="2" y="4" width="8" height="1" fill="#a0a0d0"/><rect x="9" y="4" width="1" height="1" fill="#3f6fd2"/><rect x="2" y="6" width="8" height="1" fill="#a0a0d0"/><rect x="8" y="6" width="2" height="1" fill="#3f6fd2"/><rect x="2" y="8" width="8" height="1" fill="#a0a0d0"/><rect x="6" y="8" width="4" height="1" fill="#3f6fd2"/><rect x="2" y="10" width="8" height="1" fill="#a0a0d0"/><rect x="4" y="10" width="6" height="1" fill="#3f6fd2"/><rect x="0" y="0" width="12" height="1" fill="#a6a6da"/><rect x="0" y="0" width="1" height="14" fill="#a6a6da"/><rect x="11" y="0" width="1" height="8" fill="#5a8ad8"/><rect x="11" y="8" width="1" height="6" fill="#3a3aa8"/><rect x="0" y="13" width="7" height="1" fill="#4a7ad0"/><rect x="7" y="13" width="5" height="1" fill="#3a3aa8"/></g></svg>
<div class="t" style="right:249.00px;top:321.5px;">EndDeviceInfo</div>
<svg style="left:40px;top:342px" width="12" height="14"><g shape-rendering="crispEdges"><rect x="0" y="0" width="12" height="14" fill="#fff"/><rect x="10" y="3" width="1" height="1" fill="#bcd8f2"/><rect x="9" y="4" width="2" height="1" fill="#bcd8f2"/><rect x="9" y="5" width="2" height="1" fill="#bcd8f2"/><rect x="8" y="6" width="3" height="1" fill="#bcd8f2"/><rect x="7" y="7" width="4" height="1" fill="#bcd8f2"/><rect x="6" y="8" width="5" height="1" fill="#bcd8f2"/><rect x="5" y="9" width="6" height="1" fill="#bcd8f2"/><rect x="4" y="10" width="7" height="1" fill="#bcd8f2"/><rect x="3" y="11" width="8" height="1" fill="#bcd8f2"/><rect x="1" y="12" width="10" height="1" fill="#bcd8f2"/><rect x="2" y="2" width="8" height="1" fill="#a0a0d0"/><rect x="2" y="4" width="8" height="1" fill="#a0a0d0"/><rect x="9" y="4" width="1" height="1" fill="#3f6fd2"/><rect x="2" y="6" width="8" height="1" fill="#a0a0d0"/><rect x="8" y="6" width="2" height="1" fill="#3f6fd2"/><rect x="2" y="8" width="8" height="1" fill="#a0a0d0"/><rect x="6" y="8" width="4" height="1" fill="#3f6fd2"/><rect x="2" y="10" width="8" height="1" fill="#a0a0d0"/><rect x="4" y="10" width="6" height="1" fill="#3f6fd2"/><rect x="0" y="0" width="12" height="1" fill="#a6a6da"/><rect x="0" y="0" width="1" height="14" fill="#a6a6da"/><rect x="11" y="0" width="1" height="8" fill="#5a8ad8"/><rect x="11" y="8" width="1" height="6" fill="#3a3aa8"/><rect x="0" y="13" width="7" height="1" fill="#4a7ad0"/><rect x="7" y="13" width="5" height="1" fill="#3a3aa8"/></g></svg>
<div class="t" style="right:254.80px;top:341.5px;">LifecycleDate</div>
<svg style="left:40px;top:362px" width="12" height="14"><g shape-rendering="crispEdges"><rect x="0" y="0" width="12" height="14" fill="#fff"/><rect x="10" y="3" width="1" height="1" fill="#bcd8f2"/><rect x="9" y="4" width="2" height="1" fill="#bcd8f2"/><rect x="9" y="5" width="2" height="1" fill="#bcd8f2"/><rect x="8" y="6" width="3" height="1" fill="#bcd8f2"/><rect x="7" y="7" width="4" height="1" fill="#bcd8f2"/><rect x="6" y="8" width="5" height="1" fill="#bcd8f2"/><rect x="5" y="9" width="6" height="1" fill="#bcd8f2"/><rect x="4" y="10" width="7" height="1" fill="#bcd8f2"/><rect x="3" y="11" width="8" height="1" fill="#bcd8f2"/><rect x="1" y="12" width="10" height="1" fill="#bcd8f2"/><rect x="2" y="2" width="8" height="1" fill="#a0a0d0"/><rect x="2" y="4" width="8" height="1" fill="#a0a0d0"/><rect x="9" y="4" width="1" height="1" fill="#3f6fd2"/><rect x="2" y="6" width="8" height="1" fill="#a0a0d0"/><rect x="8" y="6" width="2" height="1" fill="#3f6fd2"/><rect x="2" y="8" width="8" height="1" fill="#a0a0d0"/><rect x="6" y="8" width="4" height="1" fill="#3f6fd2"/><rect x="2" y="10" width="8" height="1" fill="#a0a0d0"/><rect x="4" y="10" width="6" height="1" fill="#3f6fd2"/><rect x="0" y="0" width="12" height="1" fill="#a6a6da"/><rect x="0" y="0" width="1" height="14" fill="#a6a6da"/><rect x="11" y="0" width="1" height="8" fill="#5a8ad8"/><rect x="11" y="8" width="1" height="6" fill="#3a3aa8"/><rect x="0" y="13" width="7" height="1" fill="#4a7ad0"/><rect x="7" y="13" width="5" height="1" fill="#3a3aa8"/></g></svg>
<div class="t" style="right:252.60px;top:361.5px;">Manufacturer</div>
<svg style="left:40px;top:382px" width="12" height="14"><g shape-rendering="crispEdges"><rect x="0" y="0" width="12" height="14" fill="#fff"/><rect x="10" y="3" width="1" height="1" fill="#bcd8f2"/><rect x="9" y="4" width="2" height="1" fill="#bcd8f2"/><rect x="9" y="5" width="2" height="1" fill="#bcd8f2"/><rect x="8" y="6" width="3" height="1" fill="#bcd8f2"/><rect x="7" y="7" width="4" height="1" fill="#bcd8f2"/><rect x="6" y="8" width="5" height="1" fill="#bcd8f2"/><rect x="5" y="9" width="6" height="1" fill="#bcd8f2"/><rect x="4" y="10" width="7" height="1" fill="#bcd8f2"/><rect x="3" y="11" width="8" height="1" fill="#bcd8f2"/><rect x="1" y="12" width="10" height="1" fill="#bcd8f2"/><rect x="2" y="2" width="8" height="1" fill="#a0a0d0"/><rect x="2" y="4" width="8" height="1" fill="#a0a0d0"/><rect x="9" y="4" width="1" height="1" fill="#3f6fd2"/><rect x="2" y="6" width="8" height="1" fill="#a0a0d0"/><rect x="8" y="6" width="2" height="1" fill="#3f6fd2"/><rect x="2" y="8" width="8" height="1" fill="#a0a0d0"/><rect x="6" y="8" width="4" height="1" fill="#3f6fd2"/><rect x="2" y="10" width="8" height="1" fill="#a0a0d0"/><rect x="4" y="10" width="6" height="1" fill="#3f6fd2"/><rect x="0" y="0" width="12" height="1" fill="#a6a6da"/><rect x="0" y="0" width="1" height="14" fill="#a6a6da"/><rect x="11" y="0" width="1" height="8" fill="#5a8ad8"/><rect x="11" y="8" width="1" height="6" fill="#3a3aa8"/><rect x="0" y="13" width="7" height="1" fill="#4a7ad0"/><rect x="7" y="13" width="5" height="1" fill="#3a3aa8"/></g></svg>
<div class="t" style="left:56.5px;top:381.5px">Minutes</div>
<svg style="left:40px;top:402px" width="12" height="14"><g shape-rendering="crispEdges"><rect x="0" y="0" width="12" height="14" fill="#fff"/><rect x="10" y="3" width="1" height="1" fill="#bcd8f2"/><rect x="9" y="4" width="2" height="1" fill="#bcd8f2"/><rect x="9" y="5" width="2" height="1" fill="#bcd8f2"/><rect x="8" y="6" width="3" height="1" fill="#bcd8f2"/><rect x="7" y="7" width="4" height="1" fill="#bcd8f2"/><rect x="6" y="8" width="5" height="1" fill="#bcd8f2"/><rect x="5" y="9" width="6" height="1" fill="#bcd8f2"/><rect x="4" y="10" width="7" height="1" fill="#bcd8f2"/><rect x="3" y="11" width="8" height="1" fill="#bcd8f2"/><rect x="1" y="12" width="10" height="1" fill="#bcd8f2"/><rect x="2" y="2" width="8" height="1" fill="#a0a0d0"/><rect x="2" y="4" width="8" height="1" fill="#a0a0d0"/><rect x="9" y="4" width="1" height="1" fill="#3f6fd2"/><rect x="2" y="6" width="8" height="1" fill="#a0a0d0"/><rect x="8" y="6" width="2" height="1" fill="#3f6fd2"/><rect x="2" y="8" width="8" height="1" fill="#a0a0d0"/><rect x="6" y="8" width="4" height="1" fill="#3f6fd2"/><rect x="2" y="10" width="8" height="1" fill="#a0a0d0"/><rect x="4" y="10" width="6" height="1" fill="#3f6fd2"/><rect x="0" y="0" width="12" height="1" fill="#a6a6da"/><rect x="0" y="0" width="1" height="14" fill="#a6a6da"/><rect x="11" y="0" width="1" height="8" fill="#5a8ad8"/><rect x="11" y="8" width="1" height="6" fill="#3a3aa8"/><rect x="0" y="13" width="7" height="1" fill="#4a7ad0"/><rect x="7" y="13" width="5" height="1" fill="#3a3aa8"/></g></svg>
<div class="t" style="left:56.5px;top:401.5px">Money</div>
<svg style="left:40px;top:422px" width="12" height="14"><g shape-rendering="crispEdges"><rect x="0" y="0" width="12" height="14" fill="#fff"/><rect x="10" y="3" width="1" height="1" fill="#bcd8f2"/><rect x="9" y="4" width="2" height="1" fill="#bcd8f2"/><rect x="9" y="5" width="2" height="1" fill="#bcd8f2"/><rect x="8" y="6" width="3" height="1" fill="#bcd8f2"/><rect x="7" y="7" width="4" height="1" fill="#bcd8f2"/><rect x="6" y="8" width="5" height="1" fill="#bcd8f2"/><rect x="5" y="9" width="6" height="1" fill="#bcd8f2"/><rect x="4" y="10" width="7" height="1" fill="#bcd8f2"/><rect x="3" y="11" width="8" height="1" fill="#bcd8f2"/><rect x="1" y="12" width="10" height="1" fill="#bcd8f2"/><rect x="2" y="2" width="8" height="1" fill="#a0a0d0"/><rect x="2" y="4" width="8" height="1" fill="#a0a0d0"/><rect x="9" y="4" width="1" height="1" fill="#3f6fd2"/><rect x="2" y="6" width="8" height="1" fill="#a0a0d0"/><rect x="8" y="6" width="2" height="1" fill="#3f6fd2"/><rect x="2" y="8" width="8" height="1" fill="#a0a0d0"/><rect x="6" y="8" width="4" height="1" fill="#3f6fd2"/><rect x="2" y="10" width="8" height="1" fill="#a0a0d0"/><rect x="4" y="10" width="6" height="1" fill="#3f6fd2"/><rect x="0" y="0" width="12" height="1" fill="#a6a6da"/><rect x="0" y="0" width="1" height="14" fill="#a6a6da"/><rect x="11" y="0" width="1" height="8" fill="#5a8ad8"/><rect x="11" y="8" width="1" height="6" fill="#3a3aa8"/><rect x="0" y="13" width="7" height="1" fill="#4a7ad0"/><rect x="7" y="13" width="5" height="1" fill="#3a3aa8"/></g></svg>
<div class="t" style="left:56.5px;top:421.5px">Name</div>
<svg style="left:25px;top:425px" width="7" height="11"><path d="M0.5 0.5L5.5 5.5L0.5 10.5Z" fill="#fff" stroke="#222"/></svg>
<svg style="left:40px;top:442px" width="12" height="14"><g shape-rendering="crispEdges"><rect x="0" y="0" width="12" height="14" fill="#fff"/><rect x="10" y="3" width="1" height="1" fill="#bcd8f2"/><rect x="9" y="4" width="2" height="1" fill="#bcd8f2"/><rect x="9" y="5" width="2" height="1" fill="#bcd8f2"/><rect x="8" y="6" width="3" height="1" fill="#bcd8f2"/><rect x="7" y="7" width="4" height="1" fill="#bcd8f2"/><rect x="6" y="8" width="5" height="1" fill="#bcd8f2"/><rect x="5" y="9" width="6" height="1" fill="#bcd8f2"/><rect x="4" y="10" width="7" height="1" fill="#bcd8f2"/><rect x="3" y="11" width="8" height="1" fill="#bcd8f2"/><rect x="1" y="12" width="10" height="1" fill="#bcd8f2"/><rect x="2" y="2" width="8" height="1" fill="#a0a0d0"/><rect x="2" y="4" width="8" height="1" fill="#a0a0d0"/><rect x="9" y="4" width="1" height="1" fill="#3f6fd2"/><rect x="2" y="6" width="8" height="1" fill="#a0a0d0"/><rect x="8" y="6" width="2" height="1" fill="#3f6fd2"/><rect x="2" y="8" width="8" height="1" fill="#a0a0d0"/><rect x="6" y="8" width="4" height="1" fill="#3f6fd2"/><rect x="2" y="10" width="8" height="1" fill="#a0a0d0"/><rect x="4" y="10" width="6" height="1" fill="#3f6fd2"/><rect x="0" y="0" width="12" height="1" fill="#a6a6da"/><rect x="0" y="0" width="1" height="14" fill="#a6a6da"/><rect x="11" y="0" width="1" height="8" fill="#5a8ad8"/><rect x="11" y="8" width="1" height="6" fill="#3a3aa8"/><rect x="0" y="13" width="7" height="1" fill="#4a7ad0"/><rect x="7" y="13" width="5" height="1" fill="#3a3aa8"/></g></svg>
<div class="t" style="left:56.5px;top:441.5px">NameType</div>
<svg style="left:25px;top:445px" width="7" height="11"><path d="M0.5 0.5L5.5 5.5L0.5 10.5Z" fill="#fff" stroke="#222"/></svg>
</div>
<div style="position:absolute;left:1110px;top:207px;width:16px;height:447px;background:#cdcdcd"></div>
<div style="position:absolute;left:1110px;top:207px;width:16px;height:16px;border:1px solid #bfbfbf;background:#fcfcfc"></div>
<svg style="left:1114px;top:213px" width="9" height="5"><path d="M0 5L4.5 0L9 5Z" fill="#6e6e6e"/></svg>
<div style="position:absolute;left:1110px;top:638px;width:16px;height:16px;border:1px solid #bfbfbf;background:#fcfcfc"></div>
<svg style="left:1114px;top:644.5px" width="9" height="5"><path d="M0 0L4.5 5L9 0Z" fill="#6e6e6e"/></svg>
<div style="position:absolute;left:1110px;top:298px;width:16px;height:183px;border:1px solid #bfbfbf;background:#fcfcfc"></div>
<div style="position:absolute;left:1126px;top:207px;width:1px;height:447px;background:#d6d2ca"></div>
<div style="position:absolute;left:1126px;top:223px;width:1px;height:415px;background:repeating-linear-gradient(to bottom,#b0a89c 0 1px,#fff 1px 2px)"></div>
<div style="position:absolute;left:1126px;top:298px;width:1px;height:183px;background:#c9c4bc"></div>
<div style="position:absolute;left:1126px;top:222px;width:1px;height:1px;background:#333"></div>
<div style="position:absolute;left:1126px;top:480px;width:1px;height:1px;background:#333"></div>
<div style="position:absolute;left:1126px;top:653px;width:1px;height:1px;background:#333"></div>
<div class="abs" style="left:446px;top:152px;width:377px;height:430px;box-shadow:0 1px 6px 1px rgba(30,40,70,0.28)"></div>
<div style="position:absolute;left:446px;top:152px;width:377px;height:430px;border:1px solid #1a66cc;background:#f0f0f0"></div>
<div style="position:absolute;left:447px;top:153px;width:375px;height:21px;background:#2b5797"></div>
<div class="t" style="left:453.5px;top:157px;color:#fff;font-size:11.4px">Property Restrictions</div>
<svg style="left:805px;top:158px" width="8" height="8"><path d="M0.5 0.5L7.5 7.5M7.5 0.5L0.5 7.5" stroke="#fff" stroke-width="1.4"/></svg>
<div class="t" style="left:463.5px;top:181px;">Property:</div>
<div class="t" style="left:463.5px;top:199px;letter-spacing:-0.100px;">EndDevice.EndDeviceFunctions</div>
<div style="position:absolute;left:461px;top:230px;width:345px;height:51px;border:1px solid #d5d5d5;border-radius:3px"></div>
<div style="position:absolute;left:467px;top:224px;width:64px;height:12px;background:#f0f0f0"></div>
<div class="t" style="left:470.3px;top:223px;letter-spacing:0.240px;">Cardinality</div>
<div class="t" style="left:469.3px;top:249px;">Minimum:</div>
<div style="position:absolute;left:529px;top:247px;width:29px;height:23px;border:1px solid #cfcfcf;background:#fcfcfc"></div>
<div class="t" style="left:533.5px;top:247px;">0</div>
<div class="t" style="left:573px;top:249px;">Maximum:</div>
<div style="position:absolute;left:638px;top:247px;width:29px;height:23px;border:1px solid #cfcfcf;background:#fcfcfc"></div>
<div class="t" style="left:642.5px;top:247px;">*</div>
<div style="position:absolute;left:690px;top:252px;width:12px;height:12px;border:1px solid #999;background:#fcfcfc"></div>
<svg style="left:690px;top:252px" width="12" height="12"><path d="M3.3 5.3 L5.5 8.3 L9.6 3.4" fill="none" stroke="#585858" stroke-width="1.3"/></svg>
<div class="t" style="left:705px;top:251px;">Unbounded</div>
<div style="position:absolute;left:461px;top:295px;width:345px;height:244px;border:1px solid #d5d5d5;border-radius:3px"></div>
<div style="position:absolute;left:467px;top:290px;width:46px;height:12px;background:#f0f0f0"></div>
<div class="t" style="left:471px;top:288px;">Options</div>
<svg style="left:477px;top:317px" width="12" height="12"><circle cx="6" cy="6" r="5.5" fill="#fff" stroke="#a8a8a8" stroke-width="1"/></svg>
<div class="t" style="left:492px;top:316px;letter-spacing:0.200px;">Default</div>
<svg style="left:575px;top:317px" width="12" height="12"><circle cx="6" cy="6" r="5.5" fill="#fff" stroke="#a8a8a8" stroke-width="1"/><circle cx="6" cy="6" r="2.1" fill="#3a3a3a"/></svg>
<div class="t" style="left:590px;top:316px;letter-spacing:0.130px;">Specialization</div>
<svg style="left:698px;top:317px" width="12" height="12"><circle cx="6" cy="6" r="5.5" fill="#fff" stroke="#a8a8a8" stroke-width="1"/></svg>
<div class="t" style="left:712.3px;top:316px;">By Reference</div>
<div style="position:absolute;left:475px;top:348px;width:318px;height:153px;border:1px solid #d5d5d5;background:#fcfcfc"></div>
<div style="position:absolute;left:477px;top:350px;width:314px;height:17px;border:1px solid #d0d0d0;border-right:none;background:#f1f1f1"></div>
<div style="position:absolute;left:788px;top:350px;width:2px;height:17px;background:#cbcbcb"></div>
<div style="position:absolute;left:790px;top:350px;width:1px;height:1px;background:#d0d0d0"></div>
<div style="position:absolute;left:790px;top:366px;width:1px;height:1px;background:#d0d0d0"></div>
<div class="t" style="left:481.5px;top:350.5px;">Choice</div>
<div style="position:absolute;left:481px;top:369px;width:12px;height:12px;border:1.3px solid #111;background:#fcfcfc"></div>
<svg style="left:481px;top:369px" width="12" height="12"><g shape-rendering="crispEdges" fill="#111"><rect x="3" y="7" width="2" height="2"/><rect x="5" y="6" width="1" height="2"/><rect x="6" y="5" width="1" height="2"/><rect x="7" y="4" width="1" height="2"/><rect x="8" y="3" width="1" height="2"/></g></svg>
<div class="t" style="left:500.5px;top:368px;letter-spacing:-0.140px;">ComFunction</div>
<div style="position:absolute;left:481px;top:386px;width:12px;height:12px;border:1.3px solid #111;background:#fcfcfc"></div>
<svg style="left:481px;top:386px" width="12" height="12"><g shape-rendering="crispEdges" fill="#111"><rect x="3" y="7" width="2" height="2"/><rect x="5" y="6" width="1" height="2"/><rect x="6" y="5" width="1" height="2"/><rect x="7" y="4" width="1" height="2"/><rect x="8" y="3" width="1" height="2"/></g></svg>
<div class="t" style="left:500.5px;top:385px;letter-spacing:0.062px;">ConnectDisconnectFunction</div>
<div style="position:absolute;left:481px;top:403px;width:12px;height:12px;border:1.3px solid #111;background:#fcfcfc"></div>
<svg style="left:481px;top:403px" width="12" height="12"><g shape-rendering="crispEdges" fill="#111"><rect x="3" y="7" width="2" height="2"/><rect x="5" y="6" width="1" height="2"/><rect x="6" y="5" width="1" height="2"/><rect x="7" y="4" width="1" height="2"/><rect x="8" y="3" width="1" height="2"/></g></svg>
<div class="t" style="left:500.5px;top:402px;">EndDeviceFunction</div>
<div style="position:absolute;left:481px;top:420px;width:12px;height:12px;border:1.3px solid #111;background:#fcfcfc"></div>
<svg style="left:481px;top:420px" width="12" height="12"><g shape-rendering="crispEdges" fill="#111"><rect x="3" y="7" width="2" height="2"/><rect x="5" y="6" width="1" height="2"/><rect x="6" y="5" width="1" height="2"/><rect x="7" y="4" width="1" height="2"/><rect x="8" y="3" width="1" height="2"/></g></svg>
<div class="t" style="left:500.5px;top:419px;letter-spacing:-0.109px;">SimpleEndDeviceFunction</div>
<div style="position:absolute;left:474px;top:511px;width:12px;height:12px;border:1px solid #999;background:#fcfcfc"></div>
<svg style="left:474px;top:511px" width="12" height="12"><path d="M3.3 5.3 L5.5 8.3 L9.6 3.4" fill="none" stroke="#585858" stroke-width="1.3"/></svg>
<div style="position:absolute;left:487px;top:510px;width:182px;height:15px;border:1px dotted #333"></div>
<div class="t" style="left:489px;top:510px;">Restrict specializations to schema</div>
<div style="position:absolute;left:474px;top:555px;width:12px;height:12px;border:1px solid #999;background:#fcfcfc"></div>
<div class="t" style="left:489.5px;top:554px;letter-spacing:0.231px;">Inline Definition</div>
<div style="position:absolute;left:665px;top:549px;width:69px;height:23px;border:1px solid #0a64d2;background:#fcfcfc"></div>
<div class="t" style="left:665px;top:553px;width:69px;text-align:center">OK</div>
<div style="position:absolute;left:737px;top:549px;width:69px;height:23px;border:1px solid #adadad;background:#fcfcfc"></div>
<div class="t" style="left:737px;top:553px;width:69px;text-align:center">Cancel</div>
</body></html>
